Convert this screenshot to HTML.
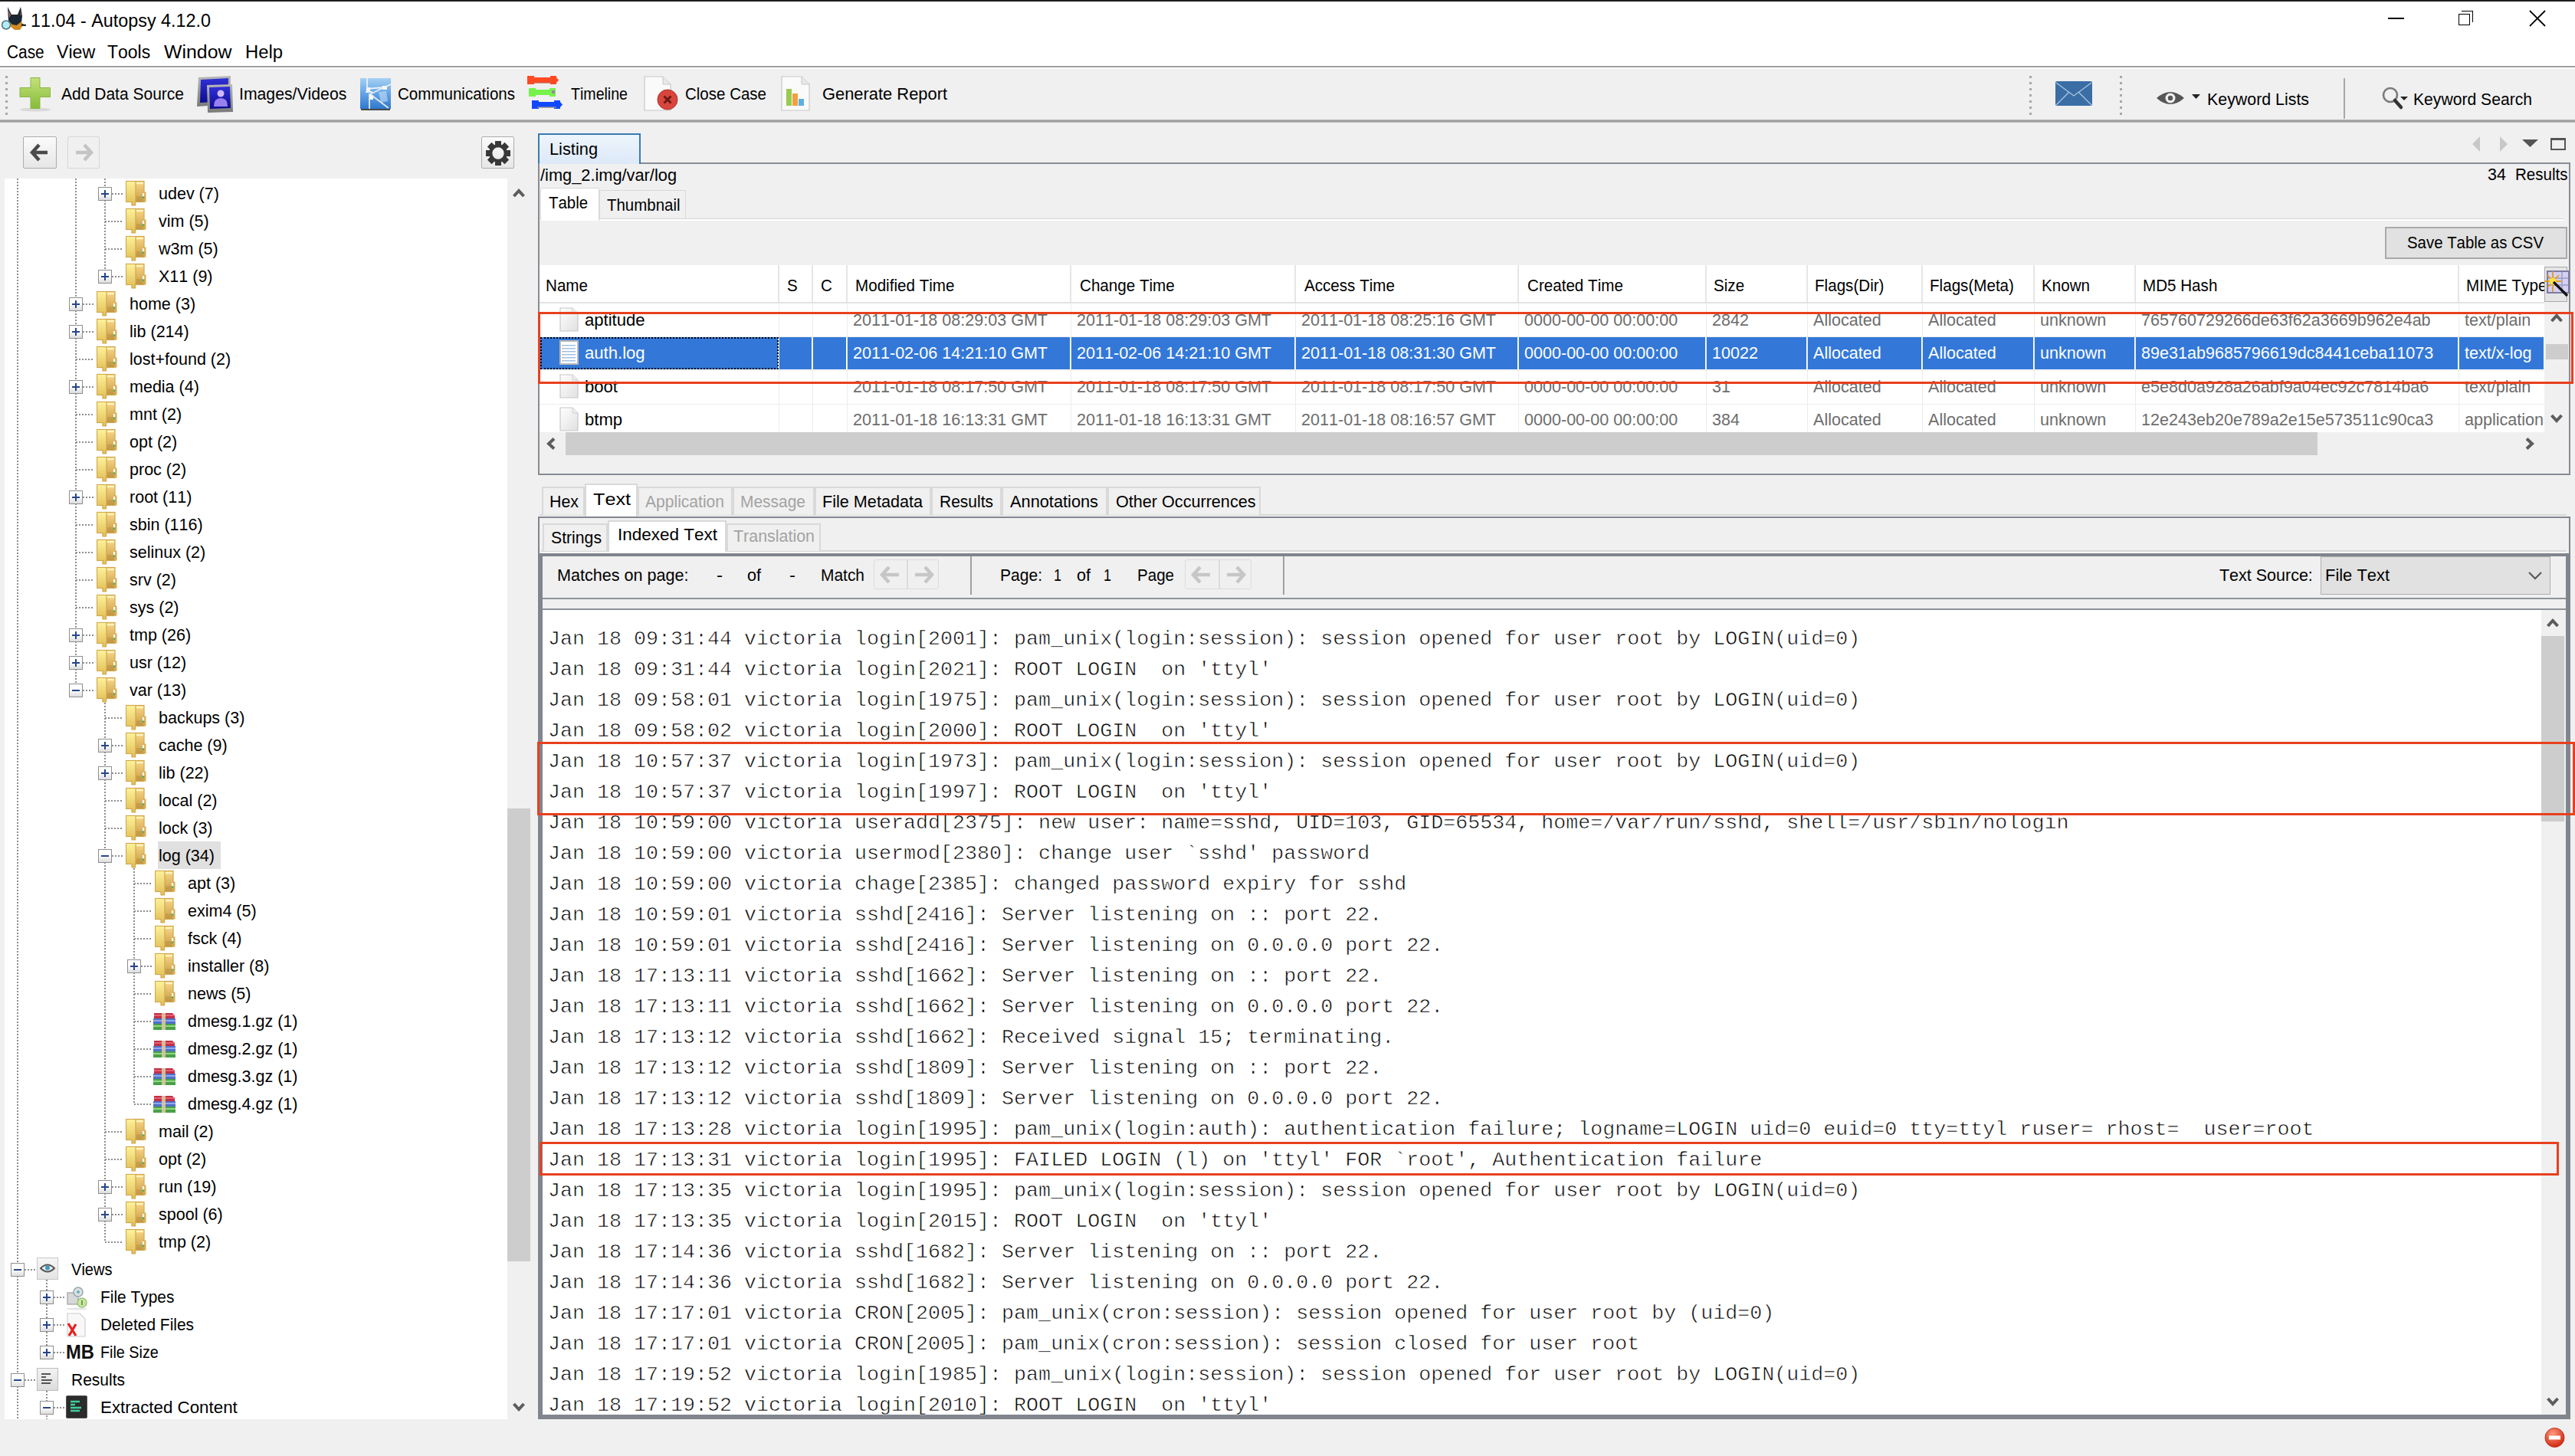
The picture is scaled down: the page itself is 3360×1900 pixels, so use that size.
<!DOCTYPE html>
<html><head><meta charset="utf-8"><title>Autopsy</title>
<style>
html,body{margin:0;padding:0;}
body{width:3360px;height:1900px;position:relative;overflow:hidden;background:#f0f0f0;font-family:"Liberation Sans",sans-serif;}
.a{position:absolute;box-sizing:border-box;}
.t{position:absolute;white-space:pre;font-family:"Liberation Sans",sans-serif;transform-origin:0 0;font-kerning:none;}
.m{position:absolute;white-space:pre;font-family:"Liberation Mono",monospace;transform-origin:0 0;font-kerning:none;}
</style></head><body>
<div class="a" style="left:0px;top:0px;width:3360px;height:87px;background:#fff"></div>
<div class="a" style="left:0px;top:0px;width:3360px;height:2px;background:#1e1e1e"></div>
<svg class="a" style="left:0px;top:5px;" width="40" height="40" viewBox="0 0 40 40">
<path d="M10 4 L15 14 L23 14 L27 4 L29 16 L28 24 L22 28 L15 28 L11 22 Z" fill="#1b2733"/>
<path d="M11 8 L14 15 L12 18 Z" fill="#b06a60"/><path d="M27 8 L28 15 L26 15 Z" fill="#7a4a40"/>
<path d="M11 22 L16 27 L22 28 L28 23 L30 28 L26 34 L19 34 L14 30 Z" fill="#d2891f"/>
<path d="M28 26 L34 27 L34 29 L28 29 Z" fill="#2a2a2a"/>
<circle cx="8" cy="27.5" r="5.5" fill="#b4ecf6" stroke="#4f7280" stroke-width="1.5"/>
</svg>
<div class="t" style="left:40px;top:11.38px;font-size:24px;line-height:32px;color:#000;transform:scaleX(0.9731);">11.04 - Autopsy 4.12.0</div>
<div class="a" style="left:3116px;top:23px;width:21px;height:2px;background:#000"></div>
<div class="a" style="left:3208px;top:18px;width:15px;height:15px;border:1.5px solid #000;background:#fff"></div>
<div class="a" style="left:3212px;top:14px;width:15px;height:15px;border-top:1.5px solid #000;border-right:1.5px solid #000"></div>
<svg class="a" style="left:3300px;top:13px;" width="22" height="22" viewBox="0 0 22 22"><path d="M1 1 L21 21 M21 1 L1 21" stroke="#000" stroke-width="1.8"/></svg>
<div class="t" style="left:9.3px;top:53.05px;font-size:23.5px;line-height:31px;color:#000;transform:scaleX(0.8877);">Case</div>
<div class="t" style="left:73.8px;top:53.05px;font-size:23.5px;line-height:31px;color:#000;transform:scaleX(0.9856);">View</div>
<div class="t" style="left:139.8px;top:53.05px;font-size:23.5px;line-height:31px;color:#000;transform:scaleX(0.9780);">Tools</div>
<div class="t" style="left:213.6px;top:53.05px;font-size:23.5px;line-height:31px;color:#000;transform:scaleX(1.0577);">Window</div>
<div class="t" style="left:320px;top:53.05px;font-size:23.5px;line-height:31px;color:#000;transform:scaleX(1.0138);">Help</div>
<div class="a" style="left:0px;top:86px;width:3360px;height:2px;background:#a0a0a0"></div>
<div class="a" style="left:0px;top:88px;width:3360px;height:69px;background:#f0f0f0"></div>
<div class="a" style="left:0px;top:156px;width:3360px;height:4px;background:linear-gradient(#c4c4c4,#a0a0a0 30%,#a0a0a0 70%,#c8c8c8)"></div>
<div class="a" style="left:0px;top:88px;width:3360px;height:1.5px;background:#fff"></div>
<div class="a" style="left:7px;top:99px;width:3px;height:3px;background:#a8a8a8"></div>
<div class="a" style="left:7px;top:107px;width:3px;height:3px;background:#a8a8a8"></div>
<div class="a" style="left:7px;top:115px;width:3px;height:3px;background:#a8a8a8"></div>
<div class="a" style="left:7px;top:123px;width:3px;height:3px;background:#a8a8a8"></div>
<div class="a" style="left:7px;top:131px;width:3px;height:3px;background:#a8a8a8"></div>
<div class="a" style="left:7px;top:139px;width:3px;height:3px;background:#a8a8a8"></div>
<div class="a" style="left:7px;top:147px;width:3px;height:3px;background:#a8a8a8"></div>
<div class="a" style="left:2648px;top:99px;width:3px;height:3px;background:#a8a8a8"></div>
<div class="a" style="left:2648px;top:107px;width:3px;height:3px;background:#a8a8a8"></div>
<div class="a" style="left:2648px;top:115px;width:3px;height:3px;background:#a8a8a8"></div>
<div class="a" style="left:2648px;top:123px;width:3px;height:3px;background:#a8a8a8"></div>
<div class="a" style="left:2648px;top:131px;width:3px;height:3px;background:#a8a8a8"></div>
<div class="a" style="left:2648px;top:139px;width:3px;height:3px;background:#a8a8a8"></div>
<div class="a" style="left:2648px;top:147px;width:3px;height:3px;background:#a8a8a8"></div>
<div class="a" style="left:2766px;top:99px;width:3px;height:3px;background:#a8a8a8"></div>
<div class="a" style="left:2766px;top:107px;width:3px;height:3px;background:#a8a8a8"></div>
<div class="a" style="left:2766px;top:115px;width:3px;height:3px;background:#a8a8a8"></div>
<div class="a" style="left:2766px;top:123px;width:3px;height:3px;background:#a8a8a8"></div>
<div class="a" style="left:2766px;top:131px;width:3px;height:3px;background:#a8a8a8"></div>
<div class="a" style="left:2766px;top:139px;width:3px;height:3px;background:#a8a8a8"></div>
<div class="a" style="left:2766px;top:147px;width:3px;height:3px;background:#a8a8a8"></div>
<svg class="a" style="left:24px;top:100px;" width="46" height="46" viewBox="0 0 46 46">
<defs><linearGradient id="gp" x1="0" y1="0" x2="0" y2="1"><stop offset="0" stop-color="#c3e27a"/><stop offset="1" stop-color="#86bb3a"/></linearGradient></defs>
<ellipse cx="22" cy="43" rx="20" ry="2.5" fill="#d8d8d8"/>
<path d="M16 1.5 H28 V14.5 H41.5 V26.5 H28 V41.5 H16 V26.5 H2 V14.5 H16 Z" fill="url(#gp)" stroke="#8ab544" stroke-width="1"/>
</svg>
<div class="t" style="left:80px;top:107.90px;font-size:22.5px;line-height:30px;color:#000;transform:scaleX(0.9337);">Add Data Source</div>
<svg class="a" style="left:254px;top:96px;" width="54" height="54" viewBox="0 0 54 54">
<defs><linearGradient id="gfr" x1="0" y1="0" x2="0" y2="1"><stop offset="0" stop-color="#b8b8b8"/><stop offset="1" stop-color="#7a7a7a"/></linearGradient>
<linearGradient id="gbl" x1="0" y1="0" x2="0" y2="1"><stop offset="0" stop-color="#3030d8"/><stop offset="1" stop-color="#0c0c90"/></linearGradient></defs>
<path d="M5 5 L47 3 L46 40 L3 43 Z" fill="url(#gfr)"/>
<path d="M8 8 L44 6 L43 36 L7 38 Z" fill="url(#gbl)"/>
<path d="M16 15 L49 14 L50 50 L17 51 Z" fill="url(#gfr)"/>
<path d="M19 18 L46 17 L47 45 L20 46 Z" fill="url(#gbl)"/>
<circle cx="34" cy="26" r="4.5" fill="#d0b8ff"/>
<path d="M25 43 Q25 32 34 32 Q43 32 43 43 Z" fill="#9880f0"/>
</svg>
<div class="t" style="left:312.3px;top:107.90px;font-size:22.5px;line-height:30px;color:#000;transform:scaleX(0.9427);">Images/Videos</div>
<svg class="a" style="left:470px;top:102px;" width="40" height="42" viewBox="0 0 40 42">
<defs><linearGradient id="gc" x1="0" y1="0" x2="0" y2="1"><stop offset="0" stop-color="#a6d0f4"/><stop offset="0.45" stop-color="#6aa8e6"/><stop offset="1" stop-color="#2f78cc"/></linearGradient></defs>
<rect x="0" y="0" width="40" height="40" fill="url(#gc)"/>
<rect x="1" y="40" width="38" height="2" fill="#4a4a4a"/>
<path d="M24 18 L34 17 L36 30 L27 32 Z" fill="#cfe6fa" opacity="0.55"/>
<path d="M9 0 V15 M8 14 L31 12 L40 8 M13 21 L31 12 M12 20 V40 M13 21 L37 39 M7 18 H16" stroke="#f2f6fa" stroke-width="1.8" fill="none" opacity="0.9"/>
<rect x="8" y="12" width="5" height="5" fill="#f6f6f0"/><rect x="29" y="10" width="6" height="5" fill="#f6f6f0"/><rect x="12" y="22" width="5" height="6" fill="#f6f6f0"/>
</svg>
<div class="t" style="left:519px;top:107.90px;font-size:22.5px;line-height:30px;color:#000;transform:scaleX(0.9131);">Communications</div>
<svg class="a" style="left:686px;top:96px;" width="50" height="50" viewBox="0 0 50 50">
<g fill="#ff4a22"><rect x="2" y="3" width="9" height="11"/><rect x="9" y="5" width="26" height="7"/><rect x="32" y="3" width="8" height="11"/><path d="M39 4 L43 8.5 L39 13 Z"/></g>
<rect x="9" y="11" width="26" height="2" fill="#c86040" opacity="0.6"/>
<g fill="#76f24a"><rect x="4" y="19" width="9" height="11"/><rect x="11" y="21" width="22" height="7"/><rect x="31" y="19" width="8" height="11"/></g>
<rect x="34" y="22" width="4" height="4" fill="#9a8aa0"/>
<g fill="#1048ff"><rect x="8" y="35" width="9" height="11"/><rect x="15" y="37" width="25" height="7"/><rect x="37" y="35" width="8" height="11"/><path d="M44 36 L48 40.5 L44 45 Z"/></g>
<rect x="15" y="43" width="25" height="2" fill="#8a8a8a" opacity="0.7"/>
</svg>
<div class="t" style="left:745px;top:107.90px;font-size:22.5px;line-height:30px;color:#000;transform:scaleX(0.8704);">Timeline</div>
<svg class="a" style="left:839px;top:98px;" width="48" height="50" viewBox="0 0 48 50">
<path d="M2 2 H26 L36 12 V46 H2 Z" fill="#fafafa" stroke="#c8c8c8" stroke-width="1.2"/>
<path d="M26 2 V12 H36" fill="#e8e8e8" stroke="#c8c8c8" stroke-width="1"/>
<circle cx="32" cy="32" r="13" fill="#d9453d" stroke="#b03028" stroke-width="1"/>
<path d="M27.5 27.5 L36.5 36.5 M36.5 27.5 L27.5 36.5" stroke="#6b1a14" stroke-width="3"/>
</svg>
<div class="t" style="left:894px;top:107.90px;font-size:22.5px;line-height:30px;color:#000;transform:scaleX(0.9114);">Close Case</div>
<svg class="a" style="left:1018px;top:98px;" width="46" height="50" viewBox="0 0 46 50">
<path d="M2 2 H28 L38 12 V46 H2 Z" fill="#fafafa" stroke="#c8c8c8" stroke-width="1.2"/>
<path d="M28 2 V12 H38" fill="#e8e8e8" stroke="#c8c8c8" stroke-width="1"/>
<rect x="8" y="18" width="7" height="22" fill="#9acb4f"/>
<rect x="16" y="24" width="7" height="16" fill="#f0a040"/>
<rect x="24" y="31" width="7" height="9" fill="#5bb0e0"/>
</svg>
<div class="t" style="left:1073px;top:107.90px;font-size:22.5px;line-height:30px;color:#000;transform:scaleX(0.9726);">Generate Report</div>
<svg class="a" style="left:2681px;top:105px;" width="50" height="34" viewBox="0 0 50 34">
<rect x="1" y="1" width="48" height="32" rx="2" fill="#3a6ea5"/>
<path d="M2 3 L25 20 L48 3 M2 32 L19 15 M48 32 L31 15" stroke="#a8c4e0" stroke-width="1.4" fill="none"/>
</svg>
<svg class="a" style="left:2812px;top:116px;" width="40" height="24" viewBox="0 0 40 24">
<path d="M2 12 Q20 -4 38 12 Q20 28 2 12 Z" fill="#575757"/>
<circle cx="20" cy="12" r="6.5" fill="#f0f0f0"/><circle cx="20" cy="12" r="3.2" fill="#575757"/>
</svg>
<svg class="a" style="left:2860px;top:123px;" width="12" height="8" viewBox="0 0 12 8"><path d="M0 0 H11 L5.5 6 Z" fill="#222"/></svg>
<div class="t" style="left:2880px;top:114.90px;font-size:22.5px;line-height:30px;color:#000;transform:scaleX(0.9496);">Keyword Lists</div>
<div class="a" style="left:3058px;top:102px;width:2px;height:53px;background:#a8a8a8"></div>
<svg class="a" style="left:3106px;top:112px;" width="38" height="32" viewBox="0 0 38 32">
<circle cx="13" cy="12" r="9" fill="none" stroke="#7a7a7a" stroke-width="2.6"/>
<path d="M19 19 L27 28" stroke="#333" stroke-width="4.5" stroke-linecap="round"/>
<path d="M26 14 H36 L31 19 Z" fill="#222"/>
</svg>
<div class="t" style="left:3149px;top:114.90px;font-size:22.5px;line-height:30px;color:#000;transform:scaleX(0.9389);">Keyword Search</div>
<div class="a" style="left:30px;top:178px;width:44px;height:42px;border:1.5px solid #acacac;border-radius:2px;background:linear-gradient(#fbfbfb,#e6e6e6)"></div>
<svg class="a" style="left:38px;top:186px;" width="28" height="26" viewBox="0 0 28 26"><path d="M13 3 L4 13 L13 23 M4 13 H24" stroke="#4a4a4a" stroke-width="4.5" fill="none" stroke-linejoin="miter"/></svg>
<div class="a" style="left:88px;top:178px;width:42px;height:42px;border:1.5px solid #d6d6d6;border-radius:2px;background:#f0f0f0"></div>
<svg class="a" style="left:95px;top:186px;" width="28" height="26" viewBox="0 0 28 26"><path d="M15 3 L24 13 L15 23 M24 13 H4" stroke="#c4c4c4" stroke-width="4.5" fill="none"/></svg>
<div class="a" style="left:628px;top:178px;width:43px;height:42px;border:1.5px solid #acacac;border-radius:2px;background:linear-gradient(#fbfbfb,#e6e6e6)"></div>
<svg class="a" style="left:633px;top:183px;" width="34" height="34" viewBox="0 0 34 34"><g transform="translate(17,17)"><rect x="-4" y="-16" width="8" height="6" fill="#383838" transform="rotate(0)"/><rect x="-4" y="-16" width="8" height="6" fill="#383838" transform="rotate(45)"/><rect x="-4" y="-16" width="8" height="6" fill="#383838" transform="rotate(90)"/><rect x="-4" y="-16" width="8" height="6" fill="#383838" transform="rotate(135)"/><rect x="-4" y="-16" width="8" height="6" fill="#383838" transform="rotate(180)"/><rect x="-4" y="-16" width="8" height="6" fill="#383838" transform="rotate(225)"/><rect x="-4" y="-16" width="8" height="6" fill="#383838" transform="rotate(270)"/><rect x="-4" y="-16" width="8" height="6" fill="#383838" transform="rotate(315)"/><circle r="9.75" fill="none" stroke="#383838" stroke-width="4.2"/></g></svg>
<div class="a" style="left:6px;top:233px;width:656px;height:1619px;background:#fff"></div>
<div class="a" style="left:662px;top:233px;width:30px;height:1619px;background:#f0f0f0"></div>
<div class="a" style="left:662px;top:1055px;width:30px;height:591px;background:#cdcdcd"></div>
<svg class="a" style="left:669px;top:245px;" width="16" height="14" viewBox="0 0 16 14"><path d="M1.5 11 L8 4 L14.5 11" stroke="#5c5c5c" stroke-width="4" fill="none"/></svg>
<svg class="a" style="left:669px;top:1829px;" width="16" height="14" viewBox="0 0 16 14"><path d="M1.5 3 L8 10 L14.5 3" stroke="#5c5c5c" stroke-width="4" fill="none"/></svg>
<svg width="0" height="0" style="position:absolute"><defs><linearGradient id="fy" x1="0" y1="0" x2="0" y2="1"><stop offset="0" stop-color="#fdf29a"/><stop offset="1" stop-color="#e2bd55"/></linearGradient>
<linearGradient id="fo" x1="0" y1="0" x2="0" y2="1"><stop offset="0" stop-color="#fbd88a"/><stop offset="1" stop-color="#c99d45"/></linearGradient></defs></svg>
<div class="a" style="left:22px;top:233px;width:2px;height:1619px;background:repeating-linear-gradient(to bottom,#8e8e8e 0 2px,transparent 2px 4px)"></div>
<div class="a" style="left:98px;top:233px;width:2px;height:668px;background:repeating-linear-gradient(to bottom,#8e8e8e 0 2px,transparent 2px 4px)"></div>
<div class="a" style="left:136px;top:233px;width:2px;height:128px;background:repeating-linear-gradient(to bottom,#8e8e8e 0 2px,transparent 2px 4px)"></div>
<div class="a" style="left:136px;top:917px;width:2px;height:704px;background:repeating-linear-gradient(to bottom,#8e8e8e 0 2px,transparent 2px 4px)"></div>
<div class="a" style="left:174px;top:1133px;width:2px;height:308px;background:repeating-linear-gradient(to bottom,#8e8e8e 0 2px,transparent 2px 4px)"></div>
<div class="a" style="left:60px;top:1670px;width:2px;height:95px;background:repeating-linear-gradient(to bottom,#8e8e8e 0 2px,transparent 2px 4px)"></div>
<div class="a" style="left:60px;top:1815px;width:2px;height:37px;background:repeating-linear-gradient(to bottom,#8e8e8e 0 2px,transparent 2px 4px)"></div>
<div class="a" style="left:146px;top:252px;width:14px;height:2px;background:repeating-linear-gradient(to right,#8e8e8e 0 2px,transparent 2px 4px)"></div>
<div class="a" style="left:128px;top:244px;width:18px;height:18px;border:1.5px solid #8f8f8f;background:linear-gradient(#ffffff 40%,#dedede)"></div>
<div class="a" style="left:132px;top:252px;width:10px;height:2px;background:#27468a"></div>
<div class="a" style="left:136px;top:248px;width:2px;height:10px;background:#27468a"></div>
<svg class="a" style="left:164px;top:235px;" width="27" height="35" viewBox="0 0 27 35">
<rect x="0.5" y="1.5" width="23.5" height="27" fill="url(#fo)" stroke="#cfa84e" stroke-width="1.2"/>
<rect x="13" y="3" width="10" height="2.2" fill="#fff4c0"/>
<rect x="13.5" y="21" width="9" height="7" fill="#b89048" opacity="0.45"/>
<rect x="23.5" y="15.5" width="3" height="13" fill="#d6ae52"/>
<rect x="22" y="17" width="2.2" height="4.5" fill="#fff"/><rect x="22" y="21.5" width="2.2" height="2.2" fill="#3cb060"/>
<path d="M0.5 1.5 H13 V28.5 H12.5 V33 H8 V28.5 H0.5 Z" fill="url(#fy)" stroke="#cfa84e" stroke-width="1.2"/>
</svg>
<div class="t" style="left:206.5px;top:237.70px;font-size:22.5px;line-height:30px;color:#000;transform:scaleX(0.9560);">udev (7)</div>
<div class="a" style="left:137px;top:288px;width:23px;height:2px;background:repeating-linear-gradient(to right,#8e8e8e 0 2px,transparent 2px 4px)"></div>
<svg class="a" style="left:164px;top:271px;" width="27" height="35" viewBox="0 0 27 35">
<rect x="0.5" y="1.5" width="23.5" height="27" fill="url(#fo)" stroke="#cfa84e" stroke-width="1.2"/>
<rect x="13" y="3" width="10" height="2.2" fill="#fff4c0"/>
<rect x="13.5" y="21" width="9" height="7" fill="#b89048" opacity="0.45"/>
<rect x="23.5" y="15.5" width="3" height="13" fill="#d6ae52"/>
<rect x="22" y="17" width="2.2" height="4.5" fill="#fff"/><rect x="22" y="21.5" width="2.2" height="2.2" fill="#3cb060"/>
<path d="M0.5 1.5 H13 V28.5 H12.5 V33 H8 V28.5 H0.5 Z" fill="url(#fy)" stroke="#cfa84e" stroke-width="1.2"/>
</svg>
<div class="t" style="left:206.5px;top:273.70px;font-size:22.5px;line-height:30px;color:#000;transform:scaleX(0.9560);">vim (5)</div>
<div class="a" style="left:137px;top:324px;width:23px;height:2px;background:repeating-linear-gradient(to right,#8e8e8e 0 2px,transparent 2px 4px)"></div>
<svg class="a" style="left:164px;top:307px;" width="27" height="35" viewBox="0 0 27 35">
<rect x="0.5" y="1.5" width="23.5" height="27" fill="url(#fo)" stroke="#cfa84e" stroke-width="1.2"/>
<rect x="13" y="3" width="10" height="2.2" fill="#fff4c0"/>
<rect x="13.5" y="21" width="9" height="7" fill="#b89048" opacity="0.45"/>
<rect x="23.5" y="15.5" width="3" height="13" fill="#d6ae52"/>
<rect x="22" y="17" width="2.2" height="4.5" fill="#fff"/><rect x="22" y="21.5" width="2.2" height="2.2" fill="#3cb060"/>
<path d="M0.5 1.5 H13 V28.5 H12.5 V33 H8 V28.5 H0.5 Z" fill="url(#fy)" stroke="#cfa84e" stroke-width="1.2"/>
</svg>
<div class="t" style="left:206.5px;top:309.70px;font-size:22.5px;line-height:30px;color:#000;transform:scaleX(0.9560);">w3m (5)</div>
<div class="a" style="left:146px;top:360px;width:14px;height:2px;background:repeating-linear-gradient(to right,#8e8e8e 0 2px,transparent 2px 4px)"></div>
<div class="a" style="left:128px;top:352px;width:18px;height:18px;border:1.5px solid #8f8f8f;background:linear-gradient(#ffffff 40%,#dedede)"></div>
<div class="a" style="left:132px;top:360px;width:10px;height:2px;background:#27468a"></div>
<div class="a" style="left:136px;top:356px;width:2px;height:10px;background:#27468a"></div>
<svg class="a" style="left:164px;top:343px;" width="27" height="35" viewBox="0 0 27 35">
<rect x="0.5" y="1.5" width="23.5" height="27" fill="url(#fo)" stroke="#cfa84e" stroke-width="1.2"/>
<rect x="13" y="3" width="10" height="2.2" fill="#fff4c0"/>
<rect x="13.5" y="21" width="9" height="7" fill="#b89048" opacity="0.45"/>
<rect x="23.5" y="15.5" width="3" height="13" fill="#d6ae52"/>
<rect x="22" y="17" width="2.2" height="4.5" fill="#fff"/><rect x="22" y="21.5" width="2.2" height="2.2" fill="#3cb060"/>
<path d="M0.5 1.5 H13 V28.5 H12.5 V33 H8 V28.5 H0.5 Z" fill="url(#fy)" stroke="#cfa84e" stroke-width="1.2"/>
</svg>
<div class="t" style="left:206.5px;top:345.70px;font-size:22.5px;line-height:30px;color:#000;transform:scaleX(0.9560);">X11 (9)</div>
<div class="a" style="left:108px;top:396px;width:14px;height:2px;background:repeating-linear-gradient(to right,#8e8e8e 0 2px,transparent 2px 4px)"></div>
<div class="a" style="left:90px;top:388px;width:18px;height:18px;border:1.5px solid #8f8f8f;background:linear-gradient(#ffffff 40%,#dedede)"></div>
<div class="a" style="left:94px;top:396px;width:10px;height:2px;background:#27468a"></div>
<div class="a" style="left:98px;top:392px;width:2px;height:10px;background:#27468a"></div>
<svg class="a" style="left:126px;top:379px;" width="27" height="35" viewBox="0 0 27 35">
<rect x="0.5" y="1.5" width="23.5" height="27" fill="url(#fo)" stroke="#cfa84e" stroke-width="1.2"/>
<rect x="13" y="3" width="10" height="2.2" fill="#fff4c0"/>
<rect x="13.5" y="21" width="9" height="7" fill="#b89048" opacity="0.45"/>
<rect x="23.5" y="15.5" width="3" height="13" fill="#d6ae52"/>
<rect x="22" y="17" width="2.2" height="4.5" fill="#fff"/><rect x="22" y="21.5" width="2.2" height="2.2" fill="#3cb060"/>
<path d="M0.5 1.5 H13 V28.5 H12.5 V33 H8 V28.5 H0.5 Z" fill="url(#fy)" stroke="#cfa84e" stroke-width="1.2"/>
</svg>
<div class="t" style="left:168.5px;top:381.70px;font-size:22.5px;line-height:30px;color:#000;transform:scaleX(0.9560);">home (3)</div>
<div class="a" style="left:108px;top:432px;width:14px;height:2px;background:repeating-linear-gradient(to right,#8e8e8e 0 2px,transparent 2px 4px)"></div>
<div class="a" style="left:90px;top:424px;width:18px;height:18px;border:1.5px solid #8f8f8f;background:linear-gradient(#ffffff 40%,#dedede)"></div>
<div class="a" style="left:94px;top:432px;width:10px;height:2px;background:#27468a"></div>
<div class="a" style="left:98px;top:428px;width:2px;height:10px;background:#27468a"></div>
<svg class="a" style="left:126px;top:415px;" width="27" height="35" viewBox="0 0 27 35">
<rect x="0.5" y="1.5" width="23.5" height="27" fill="url(#fo)" stroke="#cfa84e" stroke-width="1.2"/>
<rect x="13" y="3" width="10" height="2.2" fill="#fff4c0"/>
<rect x="13.5" y="21" width="9" height="7" fill="#b89048" opacity="0.45"/>
<rect x="23.5" y="15.5" width="3" height="13" fill="#d6ae52"/>
<rect x="22" y="17" width="2.2" height="4.5" fill="#fff"/><rect x="22" y="21.5" width="2.2" height="2.2" fill="#3cb060"/>
<path d="M0.5 1.5 H13 V28.5 H12.5 V33 H8 V28.5 H0.5 Z" fill="url(#fy)" stroke="#cfa84e" stroke-width="1.2"/>
</svg>
<div class="t" style="left:168.5px;top:417.70px;font-size:22.5px;line-height:30px;color:#000;transform:scaleX(0.9560);">lib (214)</div>
<div class="a" style="left:99px;top:468px;width:23px;height:2px;background:repeating-linear-gradient(to right,#8e8e8e 0 2px,transparent 2px 4px)"></div>
<svg class="a" style="left:126px;top:451px;" width="27" height="35" viewBox="0 0 27 35">
<rect x="0.5" y="1.5" width="23.5" height="27" fill="url(#fo)" stroke="#cfa84e" stroke-width="1.2"/>
<rect x="13" y="3" width="10" height="2.2" fill="#fff4c0"/>
<rect x="13.5" y="21" width="9" height="7" fill="#b89048" opacity="0.45"/>
<rect x="23.5" y="15.5" width="3" height="13" fill="#d6ae52"/>
<rect x="22" y="17" width="2.2" height="4.5" fill="#fff"/><rect x="22" y="21.5" width="2.2" height="2.2" fill="#3cb060"/>
<path d="M0.5 1.5 H13 V28.5 H12.5 V33 H8 V28.5 H0.5 Z" fill="url(#fy)" stroke="#cfa84e" stroke-width="1.2"/>
</svg>
<div class="t" style="left:168.5px;top:453.70px;font-size:22.5px;line-height:30px;color:#000;transform:scaleX(0.9560);">lost+found (2)</div>
<div class="a" style="left:108px;top:504px;width:14px;height:2px;background:repeating-linear-gradient(to right,#8e8e8e 0 2px,transparent 2px 4px)"></div>
<div class="a" style="left:90px;top:496px;width:18px;height:18px;border:1.5px solid #8f8f8f;background:linear-gradient(#ffffff 40%,#dedede)"></div>
<div class="a" style="left:94px;top:504px;width:10px;height:2px;background:#27468a"></div>
<div class="a" style="left:98px;top:500px;width:2px;height:10px;background:#27468a"></div>
<svg class="a" style="left:126px;top:487px;" width="27" height="35" viewBox="0 0 27 35">
<rect x="0.5" y="1.5" width="23.5" height="27" fill="url(#fo)" stroke="#cfa84e" stroke-width="1.2"/>
<rect x="13" y="3" width="10" height="2.2" fill="#fff4c0"/>
<rect x="13.5" y="21" width="9" height="7" fill="#b89048" opacity="0.45"/>
<rect x="23.5" y="15.5" width="3" height="13" fill="#d6ae52"/>
<rect x="22" y="17" width="2.2" height="4.5" fill="#fff"/><rect x="22" y="21.5" width="2.2" height="2.2" fill="#3cb060"/>
<path d="M0.5 1.5 H13 V28.5 H12.5 V33 H8 V28.5 H0.5 Z" fill="url(#fy)" stroke="#cfa84e" stroke-width="1.2"/>
</svg>
<div class="t" style="left:168.5px;top:489.70px;font-size:22.5px;line-height:30px;color:#000;transform:scaleX(0.9560);">media (4)</div>
<div class="a" style="left:99px;top:540px;width:23px;height:2px;background:repeating-linear-gradient(to right,#8e8e8e 0 2px,transparent 2px 4px)"></div>
<svg class="a" style="left:126px;top:523px;" width="27" height="35" viewBox="0 0 27 35">
<rect x="0.5" y="1.5" width="23.5" height="27" fill="url(#fo)" stroke="#cfa84e" stroke-width="1.2"/>
<rect x="13" y="3" width="10" height="2.2" fill="#fff4c0"/>
<rect x="13.5" y="21" width="9" height="7" fill="#b89048" opacity="0.45"/>
<rect x="23.5" y="15.5" width="3" height="13" fill="#d6ae52"/>
<rect x="22" y="17" width="2.2" height="4.5" fill="#fff"/><rect x="22" y="21.5" width="2.2" height="2.2" fill="#3cb060"/>
<path d="M0.5 1.5 H13 V28.5 H12.5 V33 H8 V28.5 H0.5 Z" fill="url(#fy)" stroke="#cfa84e" stroke-width="1.2"/>
</svg>
<div class="t" style="left:168.5px;top:525.70px;font-size:22.5px;line-height:30px;color:#000;transform:scaleX(0.9560);">mnt (2)</div>
<div class="a" style="left:99px;top:576px;width:23px;height:2px;background:repeating-linear-gradient(to right,#8e8e8e 0 2px,transparent 2px 4px)"></div>
<svg class="a" style="left:126px;top:559px;" width="27" height="35" viewBox="0 0 27 35">
<rect x="0.5" y="1.5" width="23.5" height="27" fill="url(#fo)" stroke="#cfa84e" stroke-width="1.2"/>
<rect x="13" y="3" width="10" height="2.2" fill="#fff4c0"/>
<rect x="13.5" y="21" width="9" height="7" fill="#b89048" opacity="0.45"/>
<rect x="23.5" y="15.5" width="3" height="13" fill="#d6ae52"/>
<rect x="22" y="17" width="2.2" height="4.5" fill="#fff"/><rect x="22" y="21.5" width="2.2" height="2.2" fill="#3cb060"/>
<path d="M0.5 1.5 H13 V28.5 H12.5 V33 H8 V28.5 H0.5 Z" fill="url(#fy)" stroke="#cfa84e" stroke-width="1.2"/>
</svg>
<div class="t" style="left:168.5px;top:561.70px;font-size:22.5px;line-height:30px;color:#000;transform:scaleX(0.9560);">opt (2)</div>
<div class="a" style="left:99px;top:612px;width:23px;height:2px;background:repeating-linear-gradient(to right,#8e8e8e 0 2px,transparent 2px 4px)"></div>
<svg class="a" style="left:126px;top:595px;" width="27" height="35" viewBox="0 0 27 35">
<rect x="0.5" y="1.5" width="23.5" height="27" fill="url(#fo)" stroke="#cfa84e" stroke-width="1.2"/>
<rect x="13" y="3" width="10" height="2.2" fill="#fff4c0"/>
<rect x="13.5" y="21" width="9" height="7" fill="#b89048" opacity="0.45"/>
<rect x="23.5" y="15.5" width="3" height="13" fill="#d6ae52"/>
<rect x="22" y="17" width="2.2" height="4.5" fill="#fff"/><rect x="22" y="21.5" width="2.2" height="2.2" fill="#3cb060"/>
<path d="M0.5 1.5 H13 V28.5 H12.5 V33 H8 V28.5 H0.5 Z" fill="url(#fy)" stroke="#cfa84e" stroke-width="1.2"/>
</svg>
<div class="t" style="left:168.5px;top:597.70px;font-size:22.5px;line-height:30px;color:#000;transform:scaleX(0.9560);">proc (2)</div>
<div class="a" style="left:108px;top:648px;width:14px;height:2px;background:repeating-linear-gradient(to right,#8e8e8e 0 2px,transparent 2px 4px)"></div>
<div class="a" style="left:90px;top:640px;width:18px;height:18px;border:1.5px solid #8f8f8f;background:linear-gradient(#ffffff 40%,#dedede)"></div>
<div class="a" style="left:94px;top:648px;width:10px;height:2px;background:#27468a"></div>
<div class="a" style="left:98px;top:644px;width:2px;height:10px;background:#27468a"></div>
<svg class="a" style="left:126px;top:631px;" width="27" height="35" viewBox="0 0 27 35">
<rect x="0.5" y="1.5" width="23.5" height="27" fill="url(#fo)" stroke="#cfa84e" stroke-width="1.2"/>
<rect x="13" y="3" width="10" height="2.2" fill="#fff4c0"/>
<rect x="13.5" y="21" width="9" height="7" fill="#b89048" opacity="0.45"/>
<rect x="23.5" y="15.5" width="3" height="13" fill="#d6ae52"/>
<rect x="22" y="17" width="2.2" height="4.5" fill="#fff"/><rect x="22" y="21.5" width="2.2" height="2.2" fill="#3cb060"/>
<path d="M0.5 1.5 H13 V28.5 H12.5 V33 H8 V28.5 H0.5 Z" fill="url(#fy)" stroke="#cfa84e" stroke-width="1.2"/>
</svg>
<div class="t" style="left:168.5px;top:633.70px;font-size:22.5px;line-height:30px;color:#000;transform:scaleX(0.9560);">root (11)</div>
<div class="a" style="left:99px;top:684px;width:23px;height:2px;background:repeating-linear-gradient(to right,#8e8e8e 0 2px,transparent 2px 4px)"></div>
<svg class="a" style="left:126px;top:667px;" width="27" height="35" viewBox="0 0 27 35">
<rect x="0.5" y="1.5" width="23.5" height="27" fill="url(#fo)" stroke="#cfa84e" stroke-width="1.2"/>
<rect x="13" y="3" width="10" height="2.2" fill="#fff4c0"/>
<rect x="13.5" y="21" width="9" height="7" fill="#b89048" opacity="0.45"/>
<rect x="23.5" y="15.5" width="3" height="13" fill="#d6ae52"/>
<rect x="22" y="17" width="2.2" height="4.5" fill="#fff"/><rect x="22" y="21.5" width="2.2" height="2.2" fill="#3cb060"/>
<path d="M0.5 1.5 H13 V28.5 H12.5 V33 H8 V28.5 H0.5 Z" fill="url(#fy)" stroke="#cfa84e" stroke-width="1.2"/>
</svg>
<div class="t" style="left:168.5px;top:669.70px;font-size:22.5px;line-height:30px;color:#000;transform:scaleX(0.9560);">sbin (116)</div>
<div class="a" style="left:99px;top:720px;width:23px;height:2px;background:repeating-linear-gradient(to right,#8e8e8e 0 2px,transparent 2px 4px)"></div>
<svg class="a" style="left:126px;top:703px;" width="27" height="35" viewBox="0 0 27 35">
<rect x="0.5" y="1.5" width="23.5" height="27" fill="url(#fo)" stroke="#cfa84e" stroke-width="1.2"/>
<rect x="13" y="3" width="10" height="2.2" fill="#fff4c0"/>
<rect x="13.5" y="21" width="9" height="7" fill="#b89048" opacity="0.45"/>
<rect x="23.5" y="15.5" width="3" height="13" fill="#d6ae52"/>
<rect x="22" y="17" width="2.2" height="4.5" fill="#fff"/><rect x="22" y="21.5" width="2.2" height="2.2" fill="#3cb060"/>
<path d="M0.5 1.5 H13 V28.5 H12.5 V33 H8 V28.5 H0.5 Z" fill="url(#fy)" stroke="#cfa84e" stroke-width="1.2"/>
</svg>
<div class="t" style="left:168.5px;top:705.70px;font-size:22.5px;line-height:30px;color:#000;transform:scaleX(0.9560);">selinux (2)</div>
<div class="a" style="left:99px;top:756px;width:23px;height:2px;background:repeating-linear-gradient(to right,#8e8e8e 0 2px,transparent 2px 4px)"></div>
<svg class="a" style="left:126px;top:739px;" width="27" height="35" viewBox="0 0 27 35">
<rect x="0.5" y="1.5" width="23.5" height="27" fill="url(#fo)" stroke="#cfa84e" stroke-width="1.2"/>
<rect x="13" y="3" width="10" height="2.2" fill="#fff4c0"/>
<rect x="13.5" y="21" width="9" height="7" fill="#b89048" opacity="0.45"/>
<rect x="23.5" y="15.5" width="3" height="13" fill="#d6ae52"/>
<rect x="22" y="17" width="2.2" height="4.5" fill="#fff"/><rect x="22" y="21.5" width="2.2" height="2.2" fill="#3cb060"/>
<path d="M0.5 1.5 H13 V28.5 H12.5 V33 H8 V28.5 H0.5 Z" fill="url(#fy)" stroke="#cfa84e" stroke-width="1.2"/>
</svg>
<div class="t" style="left:168.5px;top:741.70px;font-size:22.5px;line-height:30px;color:#000;transform:scaleX(0.9560);">srv (2)</div>
<div class="a" style="left:99px;top:792px;width:23px;height:2px;background:repeating-linear-gradient(to right,#8e8e8e 0 2px,transparent 2px 4px)"></div>
<svg class="a" style="left:126px;top:775px;" width="27" height="35" viewBox="0 0 27 35">
<rect x="0.5" y="1.5" width="23.5" height="27" fill="url(#fo)" stroke="#cfa84e" stroke-width="1.2"/>
<rect x="13" y="3" width="10" height="2.2" fill="#fff4c0"/>
<rect x="13.5" y="21" width="9" height="7" fill="#b89048" opacity="0.45"/>
<rect x="23.5" y="15.5" width="3" height="13" fill="#d6ae52"/>
<rect x="22" y="17" width="2.2" height="4.5" fill="#fff"/><rect x="22" y="21.5" width="2.2" height="2.2" fill="#3cb060"/>
<path d="M0.5 1.5 H13 V28.5 H12.5 V33 H8 V28.5 H0.5 Z" fill="url(#fy)" stroke="#cfa84e" stroke-width="1.2"/>
</svg>
<div class="t" style="left:168.5px;top:777.70px;font-size:22.5px;line-height:30px;color:#000;transform:scaleX(0.9560);">sys (2)</div>
<div class="a" style="left:108px;top:828px;width:14px;height:2px;background:repeating-linear-gradient(to right,#8e8e8e 0 2px,transparent 2px 4px)"></div>
<div class="a" style="left:90px;top:820px;width:18px;height:18px;border:1.5px solid #8f8f8f;background:linear-gradient(#ffffff 40%,#dedede)"></div>
<div class="a" style="left:94px;top:828px;width:10px;height:2px;background:#27468a"></div>
<div class="a" style="left:98px;top:824px;width:2px;height:10px;background:#27468a"></div>
<svg class="a" style="left:126px;top:811px;" width="27" height="35" viewBox="0 0 27 35">
<rect x="0.5" y="1.5" width="23.5" height="27" fill="url(#fo)" stroke="#cfa84e" stroke-width="1.2"/>
<rect x="13" y="3" width="10" height="2.2" fill="#fff4c0"/>
<rect x="13.5" y="21" width="9" height="7" fill="#b89048" opacity="0.45"/>
<rect x="23.5" y="15.5" width="3" height="13" fill="#d6ae52"/>
<rect x="22" y="17" width="2.2" height="4.5" fill="#fff"/><rect x="22" y="21.5" width="2.2" height="2.2" fill="#3cb060"/>
<path d="M0.5 1.5 H13 V28.5 H12.5 V33 H8 V28.5 H0.5 Z" fill="url(#fy)" stroke="#cfa84e" stroke-width="1.2"/>
</svg>
<div class="t" style="left:168.5px;top:813.70px;font-size:22.5px;line-height:30px;color:#000;transform:scaleX(0.9560);">tmp (26)</div>
<div class="a" style="left:108px;top:864px;width:14px;height:2px;background:repeating-linear-gradient(to right,#8e8e8e 0 2px,transparent 2px 4px)"></div>
<div class="a" style="left:90px;top:856px;width:18px;height:18px;border:1.5px solid #8f8f8f;background:linear-gradient(#ffffff 40%,#dedede)"></div>
<div class="a" style="left:94px;top:864px;width:10px;height:2px;background:#27468a"></div>
<div class="a" style="left:98px;top:860px;width:2px;height:10px;background:#27468a"></div>
<svg class="a" style="left:126px;top:847px;" width="27" height="35" viewBox="0 0 27 35">
<rect x="0.5" y="1.5" width="23.5" height="27" fill="url(#fo)" stroke="#cfa84e" stroke-width="1.2"/>
<rect x="13" y="3" width="10" height="2.2" fill="#fff4c0"/>
<rect x="13.5" y="21" width="9" height="7" fill="#b89048" opacity="0.45"/>
<rect x="23.5" y="15.5" width="3" height="13" fill="#d6ae52"/>
<rect x="22" y="17" width="2.2" height="4.5" fill="#fff"/><rect x="22" y="21.5" width="2.2" height="2.2" fill="#3cb060"/>
<path d="M0.5 1.5 H13 V28.5 H12.5 V33 H8 V28.5 H0.5 Z" fill="url(#fy)" stroke="#cfa84e" stroke-width="1.2"/>
</svg>
<div class="t" style="left:168.5px;top:849.70px;font-size:22.5px;line-height:30px;color:#000;transform:scaleX(0.9560);">usr (12)</div>
<div class="a" style="left:108px;top:900px;width:14px;height:2px;background:repeating-linear-gradient(to right,#8e8e8e 0 2px,transparent 2px 4px)"></div>
<div class="a" style="left:90px;top:892px;width:18px;height:18px;border:1.5px solid #8f8f8f;background:linear-gradient(#ffffff 40%,#dedede)"></div>
<div class="a" style="left:94px;top:900px;width:10px;height:2px;background:#27468a"></div>
<svg class="a" style="left:126px;top:883px;" width="27" height="35" viewBox="0 0 27 35">
<rect x="0.5" y="1.5" width="23.5" height="27" fill="url(#fo)" stroke="#cfa84e" stroke-width="1.2"/>
<rect x="13" y="3" width="10" height="2.2" fill="#fff4c0"/>
<rect x="13.5" y="21" width="9" height="7" fill="#b89048" opacity="0.45"/>
<rect x="23.5" y="15.5" width="3" height="13" fill="#d6ae52"/>
<rect x="22" y="17" width="2.2" height="4.5" fill="#fff"/><rect x="22" y="21.5" width="2.2" height="2.2" fill="#3cb060"/>
<path d="M0.5 1.5 H13 V28.5 H12.5 V33 H8 V28.5 H0.5 Z" fill="url(#fy)" stroke="#cfa84e" stroke-width="1.2"/>
</svg>
<div class="t" style="left:168.5px;top:885.70px;font-size:22.5px;line-height:30px;color:#000;transform:scaleX(0.9560);">var (13)</div>
<div class="a" style="left:137px;top:936px;width:23px;height:2px;background:repeating-linear-gradient(to right,#8e8e8e 0 2px,transparent 2px 4px)"></div>
<svg class="a" style="left:164px;top:919px;" width="27" height="35" viewBox="0 0 27 35">
<rect x="0.5" y="1.5" width="23.5" height="27" fill="url(#fo)" stroke="#cfa84e" stroke-width="1.2"/>
<rect x="13" y="3" width="10" height="2.2" fill="#fff4c0"/>
<rect x="13.5" y="21" width="9" height="7" fill="#b89048" opacity="0.45"/>
<rect x="23.5" y="15.5" width="3" height="13" fill="#d6ae52"/>
<rect x="22" y="17" width="2.2" height="4.5" fill="#fff"/><rect x="22" y="21.5" width="2.2" height="2.2" fill="#3cb060"/>
<path d="M0.5 1.5 H13 V28.5 H12.5 V33 H8 V28.5 H0.5 Z" fill="url(#fy)" stroke="#cfa84e" stroke-width="1.2"/>
</svg>
<div class="t" style="left:206.5px;top:921.70px;font-size:22.5px;line-height:30px;color:#000;transform:scaleX(0.9560);">backups (3)</div>
<div class="a" style="left:146px;top:972px;width:14px;height:2px;background:repeating-linear-gradient(to right,#8e8e8e 0 2px,transparent 2px 4px)"></div>
<div class="a" style="left:128px;top:964px;width:18px;height:18px;border:1.5px solid #8f8f8f;background:linear-gradient(#ffffff 40%,#dedede)"></div>
<div class="a" style="left:132px;top:972px;width:10px;height:2px;background:#27468a"></div>
<div class="a" style="left:136px;top:968px;width:2px;height:10px;background:#27468a"></div>
<svg class="a" style="left:164px;top:955px;" width="27" height="35" viewBox="0 0 27 35">
<rect x="0.5" y="1.5" width="23.5" height="27" fill="url(#fo)" stroke="#cfa84e" stroke-width="1.2"/>
<rect x="13" y="3" width="10" height="2.2" fill="#fff4c0"/>
<rect x="13.5" y="21" width="9" height="7" fill="#b89048" opacity="0.45"/>
<rect x="23.5" y="15.5" width="3" height="13" fill="#d6ae52"/>
<rect x="22" y="17" width="2.2" height="4.5" fill="#fff"/><rect x="22" y="21.5" width="2.2" height="2.2" fill="#3cb060"/>
<path d="M0.5 1.5 H13 V28.5 H12.5 V33 H8 V28.5 H0.5 Z" fill="url(#fy)" stroke="#cfa84e" stroke-width="1.2"/>
</svg>
<div class="t" style="left:206.5px;top:957.70px;font-size:22.5px;line-height:30px;color:#000;transform:scaleX(0.9560);">cache (9)</div>
<div class="a" style="left:146px;top:1008px;width:14px;height:2px;background:repeating-linear-gradient(to right,#8e8e8e 0 2px,transparent 2px 4px)"></div>
<div class="a" style="left:128px;top:1000px;width:18px;height:18px;border:1.5px solid #8f8f8f;background:linear-gradient(#ffffff 40%,#dedede)"></div>
<div class="a" style="left:132px;top:1008px;width:10px;height:2px;background:#27468a"></div>
<div class="a" style="left:136px;top:1004px;width:2px;height:10px;background:#27468a"></div>
<svg class="a" style="left:164px;top:991px;" width="27" height="35" viewBox="0 0 27 35">
<rect x="0.5" y="1.5" width="23.5" height="27" fill="url(#fo)" stroke="#cfa84e" stroke-width="1.2"/>
<rect x="13" y="3" width="10" height="2.2" fill="#fff4c0"/>
<rect x="13.5" y="21" width="9" height="7" fill="#b89048" opacity="0.45"/>
<rect x="23.5" y="15.5" width="3" height="13" fill="#d6ae52"/>
<rect x="22" y="17" width="2.2" height="4.5" fill="#fff"/><rect x="22" y="21.5" width="2.2" height="2.2" fill="#3cb060"/>
<path d="M0.5 1.5 H13 V28.5 H12.5 V33 H8 V28.5 H0.5 Z" fill="url(#fy)" stroke="#cfa84e" stroke-width="1.2"/>
</svg>
<div class="t" style="left:206.5px;top:993.70px;font-size:22.5px;line-height:30px;color:#000;transform:scaleX(0.9560);">lib (22)</div>
<div class="a" style="left:137px;top:1044px;width:23px;height:2px;background:repeating-linear-gradient(to right,#8e8e8e 0 2px,transparent 2px 4px)"></div>
<svg class="a" style="left:164px;top:1027px;" width="27" height="35" viewBox="0 0 27 35">
<rect x="0.5" y="1.5" width="23.5" height="27" fill="url(#fo)" stroke="#cfa84e" stroke-width="1.2"/>
<rect x="13" y="3" width="10" height="2.2" fill="#fff4c0"/>
<rect x="13.5" y="21" width="9" height="7" fill="#b89048" opacity="0.45"/>
<rect x="23.5" y="15.5" width="3" height="13" fill="#d6ae52"/>
<rect x="22" y="17" width="2.2" height="4.5" fill="#fff"/><rect x="22" y="21.5" width="2.2" height="2.2" fill="#3cb060"/>
<path d="M0.5 1.5 H13 V28.5 H12.5 V33 H8 V28.5 H0.5 Z" fill="url(#fy)" stroke="#cfa84e" stroke-width="1.2"/>
</svg>
<div class="t" style="left:206.5px;top:1029.70px;font-size:22.5px;line-height:30px;color:#000;transform:scaleX(0.9560);">local (2)</div>
<div class="a" style="left:137px;top:1080px;width:23px;height:2px;background:repeating-linear-gradient(to right,#8e8e8e 0 2px,transparent 2px 4px)"></div>
<svg class="a" style="left:164px;top:1063px;" width="27" height="35" viewBox="0 0 27 35">
<rect x="0.5" y="1.5" width="23.5" height="27" fill="url(#fo)" stroke="#cfa84e" stroke-width="1.2"/>
<rect x="13" y="3" width="10" height="2.2" fill="#fff4c0"/>
<rect x="13.5" y="21" width="9" height="7" fill="#b89048" opacity="0.45"/>
<rect x="23.5" y="15.5" width="3" height="13" fill="#d6ae52"/>
<rect x="22" y="17" width="2.2" height="4.5" fill="#fff"/><rect x="22" y="21.5" width="2.2" height="2.2" fill="#3cb060"/>
<path d="M0.5 1.5 H13 V28.5 H12.5 V33 H8 V28.5 H0.5 Z" fill="url(#fy)" stroke="#cfa84e" stroke-width="1.2"/>
</svg>
<div class="t" style="left:206.5px;top:1065.70px;font-size:22.5px;line-height:30px;color:#000;transform:scaleX(0.9560);">lock (3)</div>
<div class="a" style="left:146px;top:1116px;width:14px;height:2px;background:repeating-linear-gradient(to right,#8e8e8e 0 2px,transparent 2px 4px)"></div>
<div class="a" style="left:128px;top:1108px;width:18px;height:18px;border:1.5px solid #8f8f8f;background:linear-gradient(#ffffff 40%,#dedede)"></div>
<div class="a" style="left:132px;top:1116px;width:10px;height:2px;background:#27468a"></div>
<svg class="a" style="left:164px;top:1099px;" width="27" height="35" viewBox="0 0 27 35">
<rect x="0.5" y="1.5" width="23.5" height="27" fill="url(#fo)" stroke="#cfa84e" stroke-width="1.2"/>
<rect x="13" y="3" width="10" height="2.2" fill="#fff4c0"/>
<rect x="13.5" y="21" width="9" height="7" fill="#b89048" opacity="0.45"/>
<rect x="23.5" y="15.5" width="3" height="13" fill="#d6ae52"/>
<rect x="22" y="17" width="2.2" height="4.5" fill="#fff"/><rect x="22" y="21.5" width="2.2" height="2.2" fill="#3cb060"/>
<path d="M0.5 1.5 H13 V28.5 H12.5 V33 H8 V28.5 H0.5 Z" fill="url(#fy)" stroke="#cfa84e" stroke-width="1.2"/>
</svg>
<div class="a" style="left:206px;top:1098px;width:82px;height:36px;background:#e0e0e0"></div>
<div class="t" style="left:206.5px;top:1101.70px;font-size:22.5px;line-height:30px;color:#000;transform:scaleX(0.9560);">log (34)</div>
<div class="a" style="left:175px;top:1152px;width:23px;height:2px;background:repeating-linear-gradient(to right,#8e8e8e 0 2px,transparent 2px 4px)"></div>
<svg class="a" style="left:202px;top:1135px;" width="27" height="35" viewBox="0 0 27 35">
<rect x="0.5" y="1.5" width="23.5" height="27" fill="url(#fo)" stroke="#cfa84e" stroke-width="1.2"/>
<rect x="13" y="3" width="10" height="2.2" fill="#fff4c0"/>
<rect x="13.5" y="21" width="9" height="7" fill="#b89048" opacity="0.45"/>
<rect x="23.5" y="15.5" width="3" height="13" fill="#d6ae52"/>
<rect x="22" y="17" width="2.2" height="4.5" fill="#fff"/><rect x="22" y="21.5" width="2.2" height="2.2" fill="#3cb060"/>
<path d="M0.5 1.5 H13 V28.5 H12.5 V33 H8 V28.5 H0.5 Z" fill="url(#fy)" stroke="#cfa84e" stroke-width="1.2"/>
</svg>
<div class="t" style="left:244.5px;top:1137.70px;font-size:22.5px;line-height:30px;color:#000;transform:scaleX(0.9560);">apt (3)</div>
<div class="a" style="left:175px;top:1188px;width:23px;height:2px;background:repeating-linear-gradient(to right,#8e8e8e 0 2px,transparent 2px 4px)"></div>
<svg class="a" style="left:202px;top:1171px;" width="27" height="35" viewBox="0 0 27 35">
<rect x="0.5" y="1.5" width="23.5" height="27" fill="url(#fo)" stroke="#cfa84e" stroke-width="1.2"/>
<rect x="13" y="3" width="10" height="2.2" fill="#fff4c0"/>
<rect x="13.5" y="21" width="9" height="7" fill="#b89048" opacity="0.45"/>
<rect x="23.5" y="15.5" width="3" height="13" fill="#d6ae52"/>
<rect x="22" y="17" width="2.2" height="4.5" fill="#fff"/><rect x="22" y="21.5" width="2.2" height="2.2" fill="#3cb060"/>
<path d="M0.5 1.5 H13 V28.5 H12.5 V33 H8 V28.5 H0.5 Z" fill="url(#fy)" stroke="#cfa84e" stroke-width="1.2"/>
</svg>
<div class="t" style="left:244.5px;top:1173.70px;font-size:22.5px;line-height:30px;color:#000;transform:scaleX(0.9560);">exim4 (5)</div>
<div class="a" style="left:175px;top:1224px;width:23px;height:2px;background:repeating-linear-gradient(to right,#8e8e8e 0 2px,transparent 2px 4px)"></div>
<svg class="a" style="left:202px;top:1207px;" width="27" height="35" viewBox="0 0 27 35">
<rect x="0.5" y="1.5" width="23.5" height="27" fill="url(#fo)" stroke="#cfa84e" stroke-width="1.2"/>
<rect x="13" y="3" width="10" height="2.2" fill="#fff4c0"/>
<rect x="13.5" y="21" width="9" height="7" fill="#b89048" opacity="0.45"/>
<rect x="23.5" y="15.5" width="3" height="13" fill="#d6ae52"/>
<rect x="22" y="17" width="2.2" height="4.5" fill="#fff"/><rect x="22" y="21.5" width="2.2" height="2.2" fill="#3cb060"/>
<path d="M0.5 1.5 H13 V28.5 H12.5 V33 H8 V28.5 H0.5 Z" fill="url(#fy)" stroke="#cfa84e" stroke-width="1.2"/>
</svg>
<div class="t" style="left:244.5px;top:1209.70px;font-size:22.5px;line-height:30px;color:#000;transform:scaleX(0.9560);">fsck (4)</div>
<div class="a" style="left:184px;top:1260px;width:14px;height:2px;background:repeating-linear-gradient(to right,#8e8e8e 0 2px,transparent 2px 4px)"></div>
<div class="a" style="left:166px;top:1252px;width:18px;height:18px;border:1.5px solid #8f8f8f;background:linear-gradient(#ffffff 40%,#dedede)"></div>
<div class="a" style="left:170px;top:1260px;width:10px;height:2px;background:#27468a"></div>
<div class="a" style="left:174px;top:1256px;width:2px;height:10px;background:#27468a"></div>
<svg class="a" style="left:202px;top:1243px;" width="27" height="35" viewBox="0 0 27 35">
<rect x="0.5" y="1.5" width="23.5" height="27" fill="url(#fo)" stroke="#cfa84e" stroke-width="1.2"/>
<rect x="13" y="3" width="10" height="2.2" fill="#fff4c0"/>
<rect x="13.5" y="21" width="9" height="7" fill="#b89048" opacity="0.45"/>
<rect x="23.5" y="15.5" width="3" height="13" fill="#d6ae52"/>
<rect x="22" y="17" width="2.2" height="4.5" fill="#fff"/><rect x="22" y="21.5" width="2.2" height="2.2" fill="#3cb060"/>
<path d="M0.5 1.5 H13 V28.5 H12.5 V33 H8 V28.5 H0.5 Z" fill="url(#fy)" stroke="#cfa84e" stroke-width="1.2"/>
</svg>
<div class="t" style="left:244.5px;top:1245.70px;font-size:22.5px;line-height:30px;color:#000;transform:scaleX(0.9560);">installer (8)</div>
<div class="a" style="left:175px;top:1296px;width:23px;height:2px;background:repeating-linear-gradient(to right,#8e8e8e 0 2px,transparent 2px 4px)"></div>
<svg class="a" style="left:202px;top:1279px;" width="27" height="35" viewBox="0 0 27 35">
<rect x="0.5" y="1.5" width="23.5" height="27" fill="url(#fo)" stroke="#cfa84e" stroke-width="1.2"/>
<rect x="13" y="3" width="10" height="2.2" fill="#fff4c0"/>
<rect x="13.5" y="21" width="9" height="7" fill="#b89048" opacity="0.45"/>
<rect x="23.5" y="15.5" width="3" height="13" fill="#d6ae52"/>
<rect x="22" y="17" width="2.2" height="4.5" fill="#fff"/><rect x="22" y="21.5" width="2.2" height="2.2" fill="#3cb060"/>
<path d="M0.5 1.5 H13 V28.5 H12.5 V33 H8 V28.5 H0.5 Z" fill="url(#fy)" stroke="#cfa84e" stroke-width="1.2"/>
</svg>
<div class="t" style="left:244.5px;top:1281.70px;font-size:22.5px;line-height:30px;color:#000;transform:scaleX(0.9560);">news (5)</div>
<div class="a" style="left:175px;top:1332px;width:23px;height:2px;background:repeating-linear-gradient(to right,#8e8e8e 0 2px,transparent 2px 4px)"></div>
<svg class="a" style="left:197px;top:1320px;" width="34" height="28" viewBox="0 0 34 28">
<path d="M4 2 H28 L31 6 V9 H4 Z" fill="#c03048"/><rect x="4" y="4" width="27" height="2" fill="#e86070"/>
<rect x="3" y="9" width="29" height="7" fill="#5070c8"/><rect x="3" y="11" width="29" height="2" fill="#90a8f0"/>
<rect x="3" y="16" width="29" height="8" fill="#48a048"/><rect x="3" y="18" width="29" height="2" fill="#90d880"/>
<rect x="14" y="2" width="5" height="22" fill="#d8c8a0" opacity="0.9"/>
</svg>
<div class="t" style="left:244.5px;top:1317.70px;font-size:22.5px;line-height:30px;color:#000;transform:scaleX(0.9560);">dmesg.1.gz (1)</div>
<div class="a" style="left:175px;top:1368px;width:23px;height:2px;background:repeating-linear-gradient(to right,#8e8e8e 0 2px,transparent 2px 4px)"></div>
<svg class="a" style="left:197px;top:1356px;" width="34" height="28" viewBox="0 0 34 28">
<path d="M4 2 H28 L31 6 V9 H4 Z" fill="#c03048"/><rect x="4" y="4" width="27" height="2" fill="#e86070"/>
<rect x="3" y="9" width="29" height="7" fill="#5070c8"/><rect x="3" y="11" width="29" height="2" fill="#90a8f0"/>
<rect x="3" y="16" width="29" height="8" fill="#48a048"/><rect x="3" y="18" width="29" height="2" fill="#90d880"/>
<rect x="14" y="2" width="5" height="22" fill="#d8c8a0" opacity="0.9"/>
</svg>
<div class="t" style="left:244.5px;top:1353.70px;font-size:22.5px;line-height:30px;color:#000;transform:scaleX(0.9560);">dmesg.2.gz (1)</div>
<div class="a" style="left:175px;top:1404px;width:23px;height:2px;background:repeating-linear-gradient(to right,#8e8e8e 0 2px,transparent 2px 4px)"></div>
<svg class="a" style="left:197px;top:1392px;" width="34" height="28" viewBox="0 0 34 28">
<path d="M4 2 H28 L31 6 V9 H4 Z" fill="#c03048"/><rect x="4" y="4" width="27" height="2" fill="#e86070"/>
<rect x="3" y="9" width="29" height="7" fill="#5070c8"/><rect x="3" y="11" width="29" height="2" fill="#90a8f0"/>
<rect x="3" y="16" width="29" height="8" fill="#48a048"/><rect x="3" y="18" width="29" height="2" fill="#90d880"/>
<rect x="14" y="2" width="5" height="22" fill="#d8c8a0" opacity="0.9"/>
</svg>
<div class="t" style="left:244.5px;top:1389.70px;font-size:22.5px;line-height:30px;color:#000;transform:scaleX(0.9560);">dmesg.3.gz (1)</div>
<div class="a" style="left:175px;top:1440px;width:23px;height:2px;background:repeating-linear-gradient(to right,#8e8e8e 0 2px,transparent 2px 4px)"></div>
<svg class="a" style="left:197px;top:1428px;" width="34" height="28" viewBox="0 0 34 28">
<path d="M4 2 H28 L31 6 V9 H4 Z" fill="#c03048"/><rect x="4" y="4" width="27" height="2" fill="#e86070"/>
<rect x="3" y="9" width="29" height="7" fill="#5070c8"/><rect x="3" y="11" width="29" height="2" fill="#90a8f0"/>
<rect x="3" y="16" width="29" height="8" fill="#48a048"/><rect x="3" y="18" width="29" height="2" fill="#90d880"/>
<rect x="14" y="2" width="5" height="22" fill="#d8c8a0" opacity="0.9"/>
</svg>
<div class="t" style="left:244.5px;top:1425.70px;font-size:22.5px;line-height:30px;color:#000;transform:scaleX(0.9560);">dmesg.4.gz (1)</div>
<div class="a" style="left:137px;top:1476px;width:23px;height:2px;background:repeating-linear-gradient(to right,#8e8e8e 0 2px,transparent 2px 4px)"></div>
<svg class="a" style="left:164px;top:1459px;" width="27" height="35" viewBox="0 0 27 35">
<rect x="0.5" y="1.5" width="23.5" height="27" fill="url(#fo)" stroke="#cfa84e" stroke-width="1.2"/>
<rect x="13" y="3" width="10" height="2.2" fill="#fff4c0"/>
<rect x="13.5" y="21" width="9" height="7" fill="#b89048" opacity="0.45"/>
<rect x="23.5" y="15.5" width="3" height="13" fill="#d6ae52"/>
<rect x="22" y="17" width="2.2" height="4.5" fill="#fff"/><rect x="22" y="21.5" width="2.2" height="2.2" fill="#3cb060"/>
<path d="M0.5 1.5 H13 V28.5 H12.5 V33 H8 V28.5 H0.5 Z" fill="url(#fy)" stroke="#cfa84e" stroke-width="1.2"/>
</svg>
<div class="t" style="left:206.5px;top:1461.70px;font-size:22.5px;line-height:30px;color:#000;transform:scaleX(0.9560);">mail (2)</div>
<div class="a" style="left:137px;top:1512px;width:23px;height:2px;background:repeating-linear-gradient(to right,#8e8e8e 0 2px,transparent 2px 4px)"></div>
<svg class="a" style="left:164px;top:1495px;" width="27" height="35" viewBox="0 0 27 35">
<rect x="0.5" y="1.5" width="23.5" height="27" fill="url(#fo)" stroke="#cfa84e" stroke-width="1.2"/>
<rect x="13" y="3" width="10" height="2.2" fill="#fff4c0"/>
<rect x="13.5" y="21" width="9" height="7" fill="#b89048" opacity="0.45"/>
<rect x="23.5" y="15.5" width="3" height="13" fill="#d6ae52"/>
<rect x="22" y="17" width="2.2" height="4.5" fill="#fff"/><rect x="22" y="21.5" width="2.2" height="2.2" fill="#3cb060"/>
<path d="M0.5 1.5 H13 V28.5 H12.5 V33 H8 V28.5 H0.5 Z" fill="url(#fy)" stroke="#cfa84e" stroke-width="1.2"/>
</svg>
<div class="t" style="left:206.5px;top:1497.70px;font-size:22.5px;line-height:30px;color:#000;transform:scaleX(0.9560);">opt (2)</div>
<div class="a" style="left:146px;top:1548px;width:14px;height:2px;background:repeating-linear-gradient(to right,#8e8e8e 0 2px,transparent 2px 4px)"></div>
<div class="a" style="left:128px;top:1540px;width:18px;height:18px;border:1.5px solid #8f8f8f;background:linear-gradient(#ffffff 40%,#dedede)"></div>
<div class="a" style="left:132px;top:1548px;width:10px;height:2px;background:#27468a"></div>
<div class="a" style="left:136px;top:1544px;width:2px;height:10px;background:#27468a"></div>
<svg class="a" style="left:164px;top:1531px;" width="27" height="35" viewBox="0 0 27 35">
<rect x="0.5" y="1.5" width="23.5" height="27" fill="url(#fo)" stroke="#cfa84e" stroke-width="1.2"/>
<rect x="13" y="3" width="10" height="2.2" fill="#fff4c0"/>
<rect x="13.5" y="21" width="9" height="7" fill="#b89048" opacity="0.45"/>
<rect x="23.5" y="15.5" width="3" height="13" fill="#d6ae52"/>
<rect x="22" y="17" width="2.2" height="4.5" fill="#fff"/><rect x="22" y="21.5" width="2.2" height="2.2" fill="#3cb060"/>
<path d="M0.5 1.5 H13 V28.5 H12.5 V33 H8 V28.5 H0.5 Z" fill="url(#fy)" stroke="#cfa84e" stroke-width="1.2"/>
</svg>
<div class="t" style="left:206.5px;top:1533.70px;font-size:22.5px;line-height:30px;color:#000;transform:scaleX(0.9560);">run (19)</div>
<div class="a" style="left:146px;top:1584px;width:14px;height:2px;background:repeating-linear-gradient(to right,#8e8e8e 0 2px,transparent 2px 4px)"></div>
<div class="a" style="left:128px;top:1576px;width:18px;height:18px;border:1.5px solid #8f8f8f;background:linear-gradient(#ffffff 40%,#dedede)"></div>
<div class="a" style="left:132px;top:1584px;width:10px;height:2px;background:#27468a"></div>
<div class="a" style="left:136px;top:1580px;width:2px;height:10px;background:#27468a"></div>
<svg class="a" style="left:164px;top:1567px;" width="27" height="35" viewBox="0 0 27 35">
<rect x="0.5" y="1.5" width="23.5" height="27" fill="url(#fo)" stroke="#cfa84e" stroke-width="1.2"/>
<rect x="13" y="3" width="10" height="2.2" fill="#fff4c0"/>
<rect x="13.5" y="21" width="9" height="7" fill="#b89048" opacity="0.45"/>
<rect x="23.5" y="15.5" width="3" height="13" fill="#d6ae52"/>
<rect x="22" y="17" width="2.2" height="4.5" fill="#fff"/><rect x="22" y="21.5" width="2.2" height="2.2" fill="#3cb060"/>
<path d="M0.5 1.5 H13 V28.5 H12.5 V33 H8 V28.5 H0.5 Z" fill="url(#fy)" stroke="#cfa84e" stroke-width="1.2"/>
</svg>
<div class="t" style="left:206.5px;top:1569.70px;font-size:22.5px;line-height:30px;color:#000;transform:scaleX(0.9560);">spool (6)</div>
<div class="a" style="left:137px;top:1620px;width:23px;height:2px;background:repeating-linear-gradient(to right,#8e8e8e 0 2px,transparent 2px 4px)"></div>
<svg class="a" style="left:164px;top:1603px;" width="27" height="35" viewBox="0 0 27 35">
<rect x="0.5" y="1.5" width="23.5" height="27" fill="url(#fo)" stroke="#cfa84e" stroke-width="1.2"/>
<rect x="13" y="3" width="10" height="2.2" fill="#fff4c0"/>
<rect x="13.5" y="21" width="9" height="7" fill="#b89048" opacity="0.45"/>
<rect x="23.5" y="15.5" width="3" height="13" fill="#d6ae52"/>
<rect x="22" y="17" width="2.2" height="4.5" fill="#fff"/><rect x="22" y="21.5" width="2.2" height="2.2" fill="#3cb060"/>
<path d="M0.5 1.5 H13 V28.5 H12.5 V33 H8 V28.5 H0.5 Z" fill="url(#fy)" stroke="#cfa84e" stroke-width="1.2"/>
</svg>
<div class="t" style="left:206.5px;top:1605.70px;font-size:22.5px;line-height:30px;color:#000;transform:scaleX(0.9560);">tmp (2)</div>
<div class="a" style="left:32px;top:1656px;width:14px;height:2px;background:repeating-linear-gradient(to right,#8e8e8e 0 2px,transparent 2px 4px)"></div>
<div class="a" style="left:14px;top:1648px;width:18px;height:18px;border:1.5px solid #8f8f8f;background:linear-gradient(#ffffff 40%,#dedede)"></div>
<div class="a" style="left:18px;top:1656px;width:10px;height:2px;background:#27468a"></div>
<div class="a" style="left:48px;top:1641px;width:28px;height:29px;border:1.5px solid #c8c8c8;background:linear-gradient(#f6f6f6,#e4e4e4)"></div>
<svg class="a" style="left:52px;top:1648px;" width="20" height="14" viewBox="0 0 20 14"><path d="M1 7 Q10 -2 19 7 Q10 16 1 7 Z" fill="none" stroke="#555" stroke-width="2"/><circle cx="10" cy="6.5" r="3" fill="#3d9ac8"/></svg>
<div class="t" style="left:92.5px;top:1641.70px;font-size:22.5px;line-height:30px;color:#000;transform:scaleX(0.8931);">Views</div>
<div class="a" style="left:70px;top:1692px;width:14px;height:2px;background:repeating-linear-gradient(to right,#8e8e8e 0 2px,transparent 2px 4px)"></div>
<div class="a" style="left:52px;top:1684px;width:18px;height:18px;border:1.5px solid #8f8f8f;background:linear-gradient(#ffffff 40%,#dedede)"></div>
<div class="a" style="left:56px;top:1692px;width:10px;height:2px;background:#27468a"></div>
<div class="a" style="left:60px;top:1688px;width:2px;height:10px;background:#27468a"></div>
<svg class="a" style="left:84px;top:1678px;" width="32" height="32" viewBox="0 0 32 32"><rect x="4" y="9" width="14" height="15" fill="#d8d8d8" stroke="#a0a0a0" stroke-width="1.2"/>
<circle cx="18" cy="8" r="6" fill="#e0e0e0" stroke="#90a8b0" stroke-width="1.5"/><circle cx="18" cy="8" r="2" fill="#60b0c0"/>
<circle cx="23" cy="22" r="6" fill="#c8e8a0" stroke="#a0c080" stroke-width="1.5"/><rect x="22" y="19" width="2" height="6" fill="#70a050"/>
<ellipse cx="16" cy="30" rx="14" ry="1.5" fill="#e4e4e4"/></svg>
<div class="t" style="left:130.5px;top:1677.70px;font-size:22.5px;line-height:30px;color:#000;transform:scaleX(0.9289);">File Types</div>
<div class="a" style="left:70px;top:1728px;width:14px;height:2px;background:repeating-linear-gradient(to right,#8e8e8e 0 2px,transparent 2px 4px)"></div>
<div class="a" style="left:52px;top:1720px;width:18px;height:18px;border:1.5px solid #8f8f8f;background:linear-gradient(#ffffff 40%,#dedede)"></div>
<div class="a" style="left:56px;top:1728px;width:10px;height:2px;background:#27468a"></div>
<div class="a" style="left:60px;top:1724px;width:2px;height:10px;background:#27468a"></div>
<svg class="a" style="left:87px;top:1713px;" width="26" height="32" viewBox="0 0 26 32"><path d="M1 1 H17 L24 8 V31 H1 Z" fill="#f8f8f8" stroke="#d0d0d0" stroke-width="1.2"/>
<path d="M2 14 L12 30 M12 15 L3 30" stroke="#e82020" stroke-width="3.2"/></svg>
<div class="t" style="left:130.5px;top:1713.70px;font-size:22.5px;line-height:30px;color:#000;transform:scaleX(0.9291);">Deleted Files</div>
<div class="a" style="left:70px;top:1764px;width:14px;height:2px;background:repeating-linear-gradient(to right,#8e8e8e 0 2px,transparent 2px 4px)"></div>
<div class="a" style="left:52px;top:1756px;width:18px;height:18px;border:1.5px solid #8f8f8f;background:linear-gradient(#ffffff 40%,#dedede)"></div>
<div class="a" style="left:56px;top:1764px;width:10px;height:2px;background:#27468a"></div>
<div class="a" style="left:60px;top:1760px;width:2px;height:10px;background:#27468a"></div>
<div class="t" style="left:86px;top:1748.03px;font-size:25px;line-height:33px;color:#111;transform:scaleX(0.9517);font-weight:bold;">MB</div>
<div class="t" style="left:130.5px;top:1749.70px;font-size:22.5px;line-height:30px;color:#000;transform:scaleX(0.8786);">File Size</div>
<div class="a" style="left:32px;top:1800px;width:14px;height:2px;background:repeating-linear-gradient(to right,#8e8e8e 0 2px,transparent 2px 4px)"></div>
<div class="a" style="left:14px;top:1792px;width:18px;height:18px;border:1.5px solid #8f8f8f;background:linear-gradient(#ffffff 40%,#dedede)"></div>
<div class="a" style="left:18px;top:1800px;width:10px;height:2px;background:#27468a"></div>
<div class="a" style="left:48px;top:1785px;width:28px;height:30px;border:1.5px solid #bdbdbd;background:linear-gradient(#f2f2f2,#dcdcdc)"></div>
<svg class="a" style="left:53px;top:1791px;" width="18" height="18" viewBox="0 0 18 18"><path d="M1 2 H13 M1 6 H7 M1 10 H15 M1 14 H13" stroke="#555" stroke-width="2.2"/></svg>
<div class="t" style="left:92.5px;top:1785.70px;font-size:22.5px;line-height:30px;color:#000;transform:scaleX(0.9330);">Results</div>
<div class="a" style="left:70px;top:1836px;width:14px;height:2px;background:repeating-linear-gradient(to right,#8e8e8e 0 2px,transparent 2px 4px)"></div>
<div class="a" style="left:52px;top:1828px;width:18px;height:18px;border:1.5px solid #8f8f8f;background:linear-gradient(#ffffff 40%,#dedede)"></div>
<div class="a" style="left:56px;top:1836px;width:10px;height:2px;background:#27468a"></div>
<div class="a" style="left:86px;top:1821px;width:28px;height:30px;border-radius:2px;background:#2b2b2b;border:1.5px solid #555"></div>
<svg class="a" style="left:91px;top:1827px;" width="18" height="18" viewBox="0 0 18 18"><path d="M1 2 H13 M1 6 H7 M1 10 H15 M1 14 H13" stroke="#3fcf9a" stroke-width="2.4"/></svg>
<div class="t" style="left:130.5px;top:1821.70px;font-size:22.5px;line-height:30px;color:#000;transform:scaleX(0.9928);">Extracted Content</div>
<svg width="0" height="0" style="position:absolute"><defs><linearGradient id="fg" x1="0" y1="0" x2="1" y2="1"><stop offset="0" stop-color="#fff"/><stop offset="1" stop-color="#e0e0e0"/></linearGradient></defs></svg>
<div class="a" style="left:702px;top:174px;width:134px;height:40px;border:2px solid #3a7bb4;border-bottom:none;background:linear-gradient(#eef5fc,#dce9f8)"></div>
<div class="t" style="left:717px;top:179.90px;font-size:22.5px;line-height:30px;color:#000;transform:scaleX(0.9686);">Listing</div>
<svg class="a" style="left:3224px;top:177px;" width="14" height="22" viewBox="0 0 14 22"><path d="M12 1 L2 11 L12 21 Z" fill="#c8c8c8"/></svg>
<svg class="a" style="left:3260px;top:177px;" width="14" height="22" viewBox="0 0 14 22"><path d="M2 1 L12 11 L2 21 Z" fill="#c8c8c8"/></svg>
<svg class="a" style="left:3290px;top:181px;" width="24" height="12" viewBox="0 0 24 12"><path d="M1 1 H22 L11.5 11 Z" fill="#555"/></svg>
<div class="a" style="left:3328px;top:180px;width:20px;height:16px;border:2px solid #555;border-top-width:3px"></div>
<div class="a" style="left:836px;top:212px;width:2518px;height:2px;background:#878c95"></div>
<div class="a" style="left:702px;top:213px;width:2px;height:407px;background:#878c95"></div>
<div class="a" style="left:3352px;top:212px;width:2px;height:408px;background:#878c95"></div>
<div class="a" style="left:702px;top:618px;width:2652px;height:2px;background:#878c95"></div>
<div class="t" style="left:704.5px;top:213.90px;font-size:22.5px;line-height:30px;color:#000;transform:scaleX(0.9683);">/img_2.img/var/log</div>
<div class="t" style="left:3246px;top:213.40px;font-size:22.5px;line-height:30px;color:#000;transform:scaleX(0.9510);">34</div>
<div class="t" style="left:3281.7px;top:213.40px;font-size:22.5px;line-height:30px;color:#000;transform:scaleX(0.9130);">Results</div>
<div class="a" style="left:704px;top:285px;width:2642px;height:1px;background:#d6d6d6"></div>
<div class="a" style="left:704px;top:286px;width:2642px;height:2px;background:#fff"></div>
<div class="a" style="left:705px;top:245px;width:77px;height:43px;background:#fff;border:1px solid #d9d9d9;border-bottom:none"></div>
<div class="a" style="left:782px;top:248px;width:113px;height:37px;background:#f0f0f0;border:1.5px solid #d9d9d9;border-bottom:none"></div>
<div class="t" style="left:716px;top:249.90px;font-size:22.5px;line-height:30px;color:#000;transform:scaleX(0.9061);">Table</div>
<div class="t" style="left:792px;top:253.40px;font-size:22.5px;line-height:30px;color:#000;transform:scaleX(0.9091);">Thumbnail</div>
<div class="a" style="left:3112px;top:296px;width:238px;height:42px;background:#e1e1e1;border:2px solid #a9a9a9"></div>
<div class="t" style="left:3140.6px;top:301.90px;font-size:22.5px;line-height:30px;color:#000;transform:scaleX(0.9066);">Save Table as CSV</div>
<div class="a" style="left:704px;top:346px;width:2616px;height:218px;background:#fff"></div>
<div class="a" style="left:704px;top:394px;width:2616px;height:2px;background:#e3e3e3"></div>
<div class="a" style="left:1015px;top:346px;width:2px;height:48px;background:#e6e6e6"></div>
<div class="a" style="left:1016px;top:396px;width:1px;height:167px;background:#ececec"></div>
<div class="a" style="left:1059px;top:346px;width:2px;height:48px;background:#e6e6e6"></div>
<div class="a" style="left:1060px;top:396px;width:1px;height:167px;background:#ececec"></div>
<div class="a" style="left:1104px;top:346px;width:2px;height:48px;background:#e6e6e6"></div>
<div class="a" style="left:1105px;top:396px;width:1px;height:167px;background:#ececec"></div>
<div class="a" style="left:1396px;top:346px;width:2px;height:48px;background:#e6e6e6"></div>
<div class="a" style="left:1397px;top:396px;width:1px;height:167px;background:#ececec"></div>
<div class="a" style="left:1689px;top:346px;width:2px;height:48px;background:#e6e6e6"></div>
<div class="a" style="left:1690px;top:396px;width:1px;height:167px;background:#ececec"></div>
<div class="a" style="left:1980px;top:346px;width:2px;height:48px;background:#e6e6e6"></div>
<div class="a" style="left:1981px;top:396px;width:1px;height:167px;background:#ececec"></div>
<div class="a" style="left:2225px;top:346px;width:2px;height:48px;background:#e6e6e6"></div>
<div class="a" style="left:2226px;top:396px;width:1px;height:167px;background:#ececec"></div>
<div class="a" style="left:2357px;top:346px;width:2px;height:48px;background:#e6e6e6"></div>
<div class="a" style="left:2358px;top:396px;width:1px;height:167px;background:#ececec"></div>
<div class="a" style="left:2507px;top:346px;width:2px;height:48px;background:#e6e6e6"></div>
<div class="a" style="left:2508px;top:396px;width:1px;height:167px;background:#ececec"></div>
<div class="a" style="left:2653px;top:346px;width:2px;height:48px;background:#e6e6e6"></div>
<div class="a" style="left:2654px;top:396px;width:1px;height:167px;background:#ececec"></div>
<div class="a" style="left:2785px;top:346px;width:2px;height:48px;background:#e6e6e6"></div>
<div class="a" style="left:2786px;top:396px;width:1px;height:167px;background:#ececec"></div>
<div class="a" style="left:3207px;top:346px;width:2px;height:48px;background:#e6e6e6"></div>
<div class="a" style="left:3208px;top:396px;width:1px;height:167px;background:#ececec"></div>
<div class="t" style="left:712px;top:357.90px;font-size:22.5px;line-height:30px;color:#000;transform:scaleX(0.9160);">Name</div>
<div class="t" style="left:1026.7px;top:357.90px;font-size:22.5px;line-height:30px;color:#000;transform:scaleX(0.9160);">S</div>
<div class="t" style="left:1071px;top:357.90px;font-size:22.5px;line-height:30px;color:#000;transform:scaleX(0.9160);">C</div>
<div class="t" style="left:1116px;top:357.90px;font-size:22.5px;line-height:30px;color:#000;transform:scaleX(0.9160);">Modified Time</div>
<div class="t" style="left:1408.7px;top:357.90px;font-size:22.5px;line-height:30px;color:#000;transform:scaleX(0.9160);">Change Time</div>
<div class="t" style="left:1702px;top:357.90px;font-size:22.5px;line-height:30px;color:#000;transform:scaleX(0.9160);">Access Time</div>
<div class="t" style="left:1993px;top:357.90px;font-size:22.5px;line-height:30px;color:#000;transform:scaleX(0.9160);">Created Time</div>
<div class="t" style="left:2236px;top:357.90px;font-size:22.5px;line-height:30px;color:#000;transform:scaleX(0.9160);">Size</div>
<div class="t" style="left:2367.6px;top:357.90px;font-size:22.5px;line-height:30px;color:#000;transform:scaleX(0.9160);">Flags(Dir)</div>
<div class="t" style="left:2517.6px;top:357.90px;font-size:22.5px;line-height:30px;color:#000;transform:scaleX(0.9160);">Flags(Meta)</div>
<div class="t" style="left:2664px;top:357.90px;font-size:22.5px;line-height:30px;color:#000;transform:scaleX(0.9160);">Known</div>
<div class="t" style="left:2795.6px;top:357.90px;font-size:22.5px;line-height:30px;color:#000;transform:scaleX(0.9160);">MD5 Hash</div>
<div class="t" style="left:3218px;top:357.90px;font-size:22.5px;line-height:30px;color:#000;transform:scaleX(0.9160);">MIME Type</div>
<div class="a" style="left:3320px;top:348px;width:30px;height:46px;background:#e4e4e4;border:1.5px solid #ababab"></div>
<svg class="a" style="left:3318px;top:350px;" width="38" height="38" viewBox="0 0 38 38"><rect x="6" y="4" width="28" height="28" fill="#d4d0f4" stroke="#7c7ca4" stroke-width="2"/><path d="M25 5 V31 M7 13 H33 M7 22 H33" stroke="#9c9cc0" stroke-width="1.5"/><path d="M13 4 V31 M2 17 H24 M6 9 L21 25 M21 9 L6 25" stroke="#e49a1c" stroke-width="1.8"/><circle cx="13" cy="17" r="4.5" fill="#ffe040"/><path d="M14 18 L32 36" stroke="#111" stroke-width="3.2"/></svg>
<div class="a" style="left:704px;top:439px;width:2616px;height:1px;background:#ececec"></div>
<svg class="a" style="left:730px;top:401px;" width="26" height="33" viewBox="0 0 26 33"><path d="M1 1 H17 L24 8 V31 H1 Z" fill="url(#fg)" stroke="#c8c8c8" stroke-width="1.2"/><path d="M17 1 V8 H24" fill="#eee" stroke="#d0d0d0" stroke-width="1"/></svg>
<div class="t" style="left:763px;top:402.90px;font-size:22.5px;line-height:30px;color:#000;transform:scaleX(0.9820);">aptitude</div>
<div class="t" style="left:1113px;top:402.90px;font-size:22.5px;line-height:30px;color:#6d6d6d;transform:scaleX(0.9580);">2011-01-18 08:29:03 GMT</div>
<div class="t" style="left:1405px;top:402.90px;font-size:22.5px;line-height:30px;color:#6d6d6d;transform:scaleX(0.9580);">2011-01-18 08:29:03 GMT</div>
<div class="t" style="left:1698px;top:402.90px;font-size:22.5px;line-height:30px;color:#6d6d6d;transform:scaleX(0.9580);">2011-01-18 08:25:16 GMT</div>
<div class="t" style="left:1989px;top:402.90px;font-size:22.5px;line-height:30px;color:#6d6d6d;transform:scaleX(0.9580);">0000-00-00 00:00:00</div>
<div class="t" style="left:2234px;top:402.90px;font-size:22.5px;line-height:30px;color:#6d6d6d;transform:scaleX(0.9580);">2842</div>
<div class="t" style="left:2366px;top:402.90px;font-size:22.5px;line-height:30px;color:#6d6d6d;transform:scaleX(0.9580);">Allocated</div>
<div class="t" style="left:2516px;top:402.90px;font-size:22.5px;line-height:30px;color:#6d6d6d;transform:scaleX(0.9580);">Allocated</div>
<div class="t" style="left:2662px;top:402.90px;font-size:22.5px;line-height:30px;color:#6d6d6d;transform:scaleX(0.9580);">unknown</div>
<div class="t" style="left:2794px;top:402.90px;font-size:22.5px;line-height:30px;color:#6d6d6d;transform:scaleX(0.9580);">765760729266de63f62a3669b962e4ab</div>
<div class="t" style="left:3216px;top:402.90px;font-size:22.5px;line-height:30px;color:#6d6d6d;transform:scaleX(0.9580);">text/plain</div>
<div class="a" style="left:704px;top:483px;width:2616px;height:1px;background:#ececec"></div>
<div class="a" style="left:704px;top:440px;width:311px;height:42px;background:#3378d8"></div>
<div class="a" style="left:1017px;top:440px;width:42px;height:42px;background:#3378d8"></div>
<div class="a" style="left:1061px;top:440px;width:43px;height:42px;background:#3378d8"></div>
<div class="a" style="left:1106px;top:440px;width:290px;height:42px;background:#3378d8"></div>
<div class="a" style="left:1398px;top:440px;width:291px;height:42px;background:#3378d8"></div>
<div class="a" style="left:1691px;top:440px;width:289px;height:42px;background:#3378d8"></div>
<div class="a" style="left:1982px;top:440px;width:243px;height:42px;background:#3378d8"></div>
<div class="a" style="left:2227px;top:440px;width:130px;height:42px;background:#3378d8"></div>
<div class="a" style="left:2359px;top:440px;width:148px;height:42px;background:#3378d8"></div>
<div class="a" style="left:2509px;top:440px;width:144px;height:42px;background:#3378d8"></div>
<div class="a" style="left:2655px;top:440px;width:130px;height:42px;background:#3378d8"></div>
<div class="a" style="left:2787px;top:440px;width:420px;height:42px;background:#3378d8"></div>
<div class="a" style="left:3209px;top:440px;width:110px;height:42px;background:#3378d8"></div>
<div class="a" style="left:705px;top:440px;width:311px;height:42px;border:2px dotted #000;outline:0"></div>
<svg class="a" style="left:730px;top:444px;" width="26" height="33" viewBox="0 0 26 33"><rect x="1" y="1" width="23" height="30" fill="#fff" stroke="#b8b8b8" stroke-width="2"/><rect x="6" y="6" width="15" height="1.5" fill="#9ec0e8"/><rect x="4" y="6" width="1.2" height="1.5" fill="#666"/><rect x="6" y="10" width="15" height="1.5" fill="#9ec0e8"/><rect x="4" y="10" width="1.2" height="1.5" fill="#666"/><rect x="6" y="14" width="15" height="1.5" fill="#9ec0e8"/><rect x="4" y="14" width="1.2" height="1.5" fill="#666"/><rect x="6" y="18" width="15" height="1.5" fill="#9ec0e8"/><rect x="4" y="18" width="1.2" height="1.5" fill="#666"/><rect x="6" y="22" width="15" height="1.5" fill="#9ec0e8"/><rect x="4" y="22" width="1.2" height="1.5" fill="#666"/><rect x="6" y="26" width="15" height="1.5" fill="#9ec0e8"/><rect x="4" y="26" width="1.2" height="1.5" fill="#666"/></svg>
<div class="t" style="left:763px;top:446.40px;font-size:22.5px;line-height:30px;color:#fff;transform:scaleX(0.9820);">auth.log</div>
<div class="t" style="left:1113px;top:446.40px;font-size:22.5px;line-height:30px;color:#fff;transform:scaleX(0.9580);">2011-02-06 14:21:10 GMT</div>
<div class="t" style="left:1405px;top:446.40px;font-size:22.5px;line-height:30px;color:#fff;transform:scaleX(0.9580);">2011-02-06 14:21:10 GMT</div>
<div class="t" style="left:1698px;top:446.40px;font-size:22.5px;line-height:30px;color:#fff;transform:scaleX(0.9580);">2011-01-18 08:31:30 GMT</div>
<div class="t" style="left:1989px;top:446.40px;font-size:22.5px;line-height:30px;color:#fff;transform:scaleX(0.9580);">0000-00-00 00:00:00</div>
<div class="t" style="left:2234px;top:446.40px;font-size:22.5px;line-height:30px;color:#fff;transform:scaleX(0.9580);">10022</div>
<div class="t" style="left:2366px;top:446.40px;font-size:22.5px;line-height:30px;color:#fff;transform:scaleX(0.9580);">Allocated</div>
<div class="t" style="left:2516px;top:446.40px;font-size:22.5px;line-height:30px;color:#fff;transform:scaleX(0.9580);">Allocated</div>
<div class="t" style="left:2662px;top:446.40px;font-size:22.5px;line-height:30px;color:#fff;transform:scaleX(0.9580);">unknown</div>
<div class="t" style="left:2794px;top:446.40px;font-size:22.5px;line-height:30px;color:#fff;transform:scaleX(0.9580);">89e31ab9685796619dc8441ceba11073</div>
<div class="t" style="left:3216px;top:446.40px;font-size:22.5px;line-height:30px;color:#fff;transform:scaleX(0.9580);">text/x-log</div>
<div class="a" style="left:704px;top:527px;width:2616px;height:1px;background:#ececec"></div>
<svg class="a" style="left:730px;top:488px;" width="26" height="33" viewBox="0 0 26 33"><path d="M1 1 H17 L24 8 V31 H1 Z" fill="url(#fg)" stroke="#c8c8c8" stroke-width="1.2"/><path d="M17 1 V8 H24" fill="#eee" stroke="#d0d0d0" stroke-width="1"/></svg>
<div class="t" style="left:763px;top:489.90px;font-size:22.5px;line-height:30px;color:#000;transform:scaleX(0.9820);">boot</div>
<div class="t" style="left:1113px;top:489.90px;font-size:22.5px;line-height:30px;color:#6d6d6d;transform:scaleX(0.9580);">2011-01-18 08:17:50 GMT</div>
<div class="t" style="left:1405px;top:489.90px;font-size:22.5px;line-height:30px;color:#6d6d6d;transform:scaleX(0.9580);">2011-01-18 08:17:50 GMT</div>
<div class="t" style="left:1698px;top:489.90px;font-size:22.5px;line-height:30px;color:#6d6d6d;transform:scaleX(0.9580);">2011-01-18 08:17:50 GMT</div>
<div class="t" style="left:1989px;top:489.90px;font-size:22.5px;line-height:30px;color:#6d6d6d;transform:scaleX(0.9580);">0000-00-00 00:00:00</div>
<div class="t" style="left:2234px;top:489.90px;font-size:22.5px;line-height:30px;color:#6d6d6d;transform:scaleX(0.9580);">31</div>
<div class="t" style="left:2366px;top:489.90px;font-size:22.5px;line-height:30px;color:#6d6d6d;transform:scaleX(0.9580);">Allocated</div>
<div class="t" style="left:2516px;top:489.90px;font-size:22.5px;line-height:30px;color:#6d6d6d;transform:scaleX(0.9580);">Allocated</div>
<div class="t" style="left:2662px;top:489.90px;font-size:22.5px;line-height:30px;color:#6d6d6d;transform:scaleX(0.9580);">unknown</div>
<div class="t" style="left:2794px;top:489.90px;font-size:22.5px;line-height:30px;color:#6d6d6d;transform:scaleX(0.9580);">e5e8d0a928a26abf9a04ec92c7814ba6</div>
<div class="t" style="left:3216px;top:489.90px;font-size:22.5px;line-height:30px;color:#6d6d6d;transform:scaleX(0.9580);">text/plain</div>
<svg class="a" style="left:730px;top:531px;" width="26" height="33" viewBox="0 0 26 33"><path d="M1 1 H17 L24 8 V31 H1 Z" fill="url(#fg)" stroke="#c8c8c8" stroke-width="1.2"/><path d="M17 1 V8 H24" fill="#eee" stroke="#d0d0d0" stroke-width="1"/></svg>
<div class="t" style="left:763px;top:533.40px;font-size:22.5px;line-height:30px;color:#000;transform:scaleX(0.9820);">btmp</div>
<div class="t" style="left:1113px;top:533.40px;font-size:22.5px;line-height:30px;color:#6d6d6d;transform:scaleX(0.9580);">2011-01-18 16:13:31 GMT</div>
<div class="t" style="left:1405px;top:533.40px;font-size:22.5px;line-height:30px;color:#6d6d6d;transform:scaleX(0.9580);">2011-01-18 16:13:31 GMT</div>
<div class="t" style="left:1698px;top:533.40px;font-size:22.5px;line-height:30px;color:#6d6d6d;transform:scaleX(0.9580);">2011-01-18 08:16:57 GMT</div>
<div class="t" style="left:1989px;top:533.40px;font-size:22.5px;line-height:30px;color:#6d6d6d;transform:scaleX(0.9580);">0000-00-00 00:00:00</div>
<div class="t" style="left:2234px;top:533.40px;font-size:22.5px;line-height:30px;color:#6d6d6d;transform:scaleX(0.9580);">384</div>
<div class="t" style="left:2366px;top:533.40px;font-size:22.5px;line-height:30px;color:#6d6d6d;transform:scaleX(0.9580);">Allocated</div>
<div class="t" style="left:2516px;top:533.40px;font-size:22.5px;line-height:30px;color:#6d6d6d;transform:scaleX(0.9580);">Allocated</div>
<div class="t" style="left:2662px;top:533.40px;font-size:22.5px;line-height:30px;color:#6d6d6d;transform:scaleX(0.9580);">unknown</div>
<div class="t" style="left:2794px;top:533.40px;font-size:22.5px;line-height:30px;color:#6d6d6d;transform:scaleX(0.9580);">12e243eb20e789a2e15e573511c90ca3</div>
<div class="t" style="left:3216px;top:533.40px;font-size:22.5px;line-height:30px;color:#6d6d6d;transform:scaleX(0.9580);">application</div>
<div class="a" style="left:3320px;top:396px;width:32px;height:168px;background:#f0f0f0"></div>
<div class="a" style="left:3322px;top:449px;width:29px;height:20px;background:#cdcdcd"></div>
<svg class="a" style="left:3328px;top:408px;" width="16" height="14" viewBox="0 0 16 14"><path d="M1.5 11 L8 4 L14.5 11" stroke="#5c5c5c" stroke-width="4" fill="none"/></svg>
<svg class="a" style="left:3328px;top:539px;" width="16" height="14" viewBox="0 0 16 14"><path d="M1.5 3 L8 10 L14.5 3" stroke="#5c5c5c" stroke-width="4" fill="none"/></svg>
<div class="a" style="left:704px;top:564px;width:2648px;height:30px;background:#f0f0f0"></div>
<div class="a" style="left:738px;top:564px;width:2286px;height:30px;background:#cdcdcd"></div>
<svg class="a" style="left:712px;top:571px;" width="14" height="16" viewBox="0 0 14 16"><path d="M11 1.5 L4 8 L11 14.5" stroke="#5c5c5c" stroke-width="4" fill="none"/></svg>
<svg class="a" style="left:3294px;top:571px;" width="14" height="16" viewBox="0 0 14 16"><path d="M3 1.5 L10 8 L3 14.5" stroke="#5c5c5c" stroke-width="4" fill="none"/></svg>
<div class="a" style="left:702px;top:407px;width:2656px;height:94px;border:3px solid #e8401e"></div>
<div class="a" style="left:704px;top:670.5px;width:2645px;height:2px;background:#d6d6d6"></div>
<div class="a" style="left:704px;top:672.5px;width:2645px;height:1.5px;background:#fff"></div>
<div class="a" style="left:707px;top:635px;width:56px;height:37px;background:#f0f0f0;border:2px solid #d9d9d9;border-bottom:none"></div>
<div class="a" style="left:763px;top:631px;width:69px;height:42.5px;background:#fff;border:2px solid #d9d9d9;border-bottom:none"></div>
<div class="a" style="left:832px;top:635px;width:124px;height:37px;background:#f0f0f0;border:2px solid #d9d9d9;border-bottom:none"></div>
<div class="a" style="left:956px;top:635px;width:107px;height:37px;background:#f0f0f0;border:2px solid #d9d9d9;border-bottom:none"></div>
<div class="a" style="left:1063px;top:635px;width:152px;height:37px;background:#f0f0f0;border:2px solid #d9d9d9;border-bottom:none"></div>
<div class="a" style="left:1215px;top:635px;width:92px;height:37px;background:#f0f0f0;border:2px solid #d9d9d9;border-bottom:none"></div>
<div class="a" style="left:1307px;top:635px;width:138px;height:37px;background:#f0f0f0;border:2px solid #d9d9d9;border-bottom:none"></div>
<div class="a" style="left:1445px;top:635px;width:200px;height:37px;background:#f0f0f0;border:2px solid #d9d9d9;border-bottom:none"></div>
<div class="a" style="left:702px;top:674px;width:2652px;height:2px;background:#80858e"></div>
<div class="t" style="left:717px;top:639.90px;font-size:22.5px;line-height:30px;color:#000;transform:scaleX(0.9497);">Hex</div>
<div class="t" style="left:774px;top:636.90px;font-size:22.5px;line-height:30px;color:#000;transform:scaleX(1.1198);">Text</div>
<div class="t" style="left:842px;top:639.90px;font-size:22.5px;line-height:30px;color:#a3a3a3;transform:scaleX(0.9358);">Application</div>
<div class="t" style="left:966px;top:639.90px;font-size:22.5px;line-height:30px;color:#a3a3a3;transform:scaleX(0.9310);">Message</div>
<div class="t" style="left:1073px;top:639.90px;font-size:22.5px;line-height:30px;color:#000;transform:scaleX(0.9610);">File Metadata</div>
<div class="t" style="left:1226px;top:639.90px;font-size:22.5px;line-height:30px;color:#000;transform:scaleX(0.9330);">Results</div>
<div class="t" style="left:1318px;top:639.90px;font-size:22.5px;line-height:30px;color:#000;transform:scaleX(0.9677);">Annotations</div>
<div class="t" style="left:1456px;top:639.90px;font-size:22.5px;line-height:30px;color:#000;transform:scaleX(0.9602);">Other Occurrences</div>
<div class="a" style="left:702px;top:674px;width:2px;height:50px;background:#80858e"></div>
<div class="a" style="left:3352px;top:674px;width:2px;height:50px;background:#80858e"></div>
<div class="a" style="left:706px;top:718px;width:2642px;height:2px;background:#d6d6d6"></div>
<div class="a" style="left:706px;top:720px;width:2642px;height:2px;background:#fff"></div>
<div class="a" style="left:708px;top:683px;width:85px;height:36px;background:#f0f0f0;border:2px solid #d9d9d9;border-bottom:none"></div>
<div class="a" style="left:793px;top:679px;width:155px;height:41px;background:#fff;border:2px solid #d9d9d9;border-bottom:none"></div>
<div class="a" style="left:948px;top:683px;width:123px;height:36px;background:#f0f0f0;border:2px solid #d9d9d9;border-bottom:none"></div>
<div class="t" style="left:719px;top:686.90px;font-size:22.5px;line-height:30px;color:#000;transform:scaleX(0.9425);">Strings</div>
<div class="t" style="left:806px;top:682.90px;font-size:22.5px;line-height:30px;color:#000;">Indexed Text</div>
<div class="t" style="left:957px;top:684.90px;font-size:22.5px;line-height:30px;color:#a3a3a3;transform:scaleX(0.9524);">Translation</div>
<div class="a" style="left:702px;top:722px;width:2652px;height:4px;background:#80858e"></div>
<div class="a" style="left:702px;top:722px;width:6px;height:1130px;background:#80858e"></div>
<div class="a" style="left:3348px;top:722px;width:6px;height:1130px;background:#80858e"></div>
<div class="a" style="left:702px;top:1846px;width:2652px;height:6px;background:#80858e"></div>
<div class="a" style="left:708px;top:726px;width:2640px;height:54px;background:#f0f0f0"></div>
<div class="a" style="left:708px;top:780px;width:2640px;height:2px;background:#8e939b"></div>
<div class="a" style="left:708px;top:782px;width:2640px;height:12px;background:#f0f0f0"></div>
<div class="a" style="left:708px;top:794px;width:2640px;height:2px;background:#8e939b"></div>
<div class="t" style="left:727px;top:735.90px;font-size:22.5px;line-height:30px;color:#000;transform:scaleX(0.9594);">Matches on page:</div>
<div class="t" style="left:935px;top:735.90px;font-size:22.5px;line-height:30px;color:#000;transform:scaleX(1.0677);">-</div>
<div class="t" style="left:975.4px;top:735.90px;font-size:22.5px;line-height:30px;color:#000;transform:scaleX(0.9593);">of</div>
<div class="t" style="left:1030px;top:735.90px;font-size:22.5px;line-height:30px;color:#000;transform:scaleX(1.0677);">-</div>
<div class="t" style="left:1070.6px;top:735.90px;font-size:22.5px;line-height:30px;color:#000;transform:scaleX(0.9303);">Match</div>
<div class="a" style="left:1140px;top:730px;width:85px;height:39px;border:1.5px solid #dcdcdc;border-radius:3px;background:#f0f0f0"></div>
<div class="a" style="left:1183px;top:731px;width:1.5px;height:37px;background:#dcdcdc"></div>
<svg class="a" style="left:1148px;top:738px;" width="28" height="24" viewBox="0 0 28 24"><path d="M12 2 L3 12 L12 22 M3 12 H25" stroke="#c6c6c6" stroke-width="4.5" fill="none"/></svg>
<svg class="a" style="left:1191px;top:738px;" width="28" height="24" viewBox="0 0 28 24"><path d="M16 2 L25 12 L16 22 M25 12 H3" stroke="#c6c6c6" stroke-width="4.5" fill="none"/></svg>
<div class="a" style="left:1266px;top:726px;width:2px;height:50px;background:#a0a0a0"></div>
<div class="t" style="left:1304.7px;top:735.90px;font-size:22.5px;line-height:30px;color:#000;transform:scaleX(0.9354);">Page:</div>
<div class="t" style="left:1375.4px;top:735.90px;font-size:22.5px;line-height:30px;color:#000;transform:scaleX(0.7991);">1</div>
<div class="t" style="left:1404.6px;top:735.90px;font-size:22.5px;line-height:30px;color:#000;transform:scaleX(0.9593);">of</div>
<div class="t" style="left:1439.5px;top:735.90px;font-size:22.5px;line-height:30px;color:#000;transform:scaleX(0.7991);">1</div>
<div class="t" style="left:1484.2px;top:735.90px;font-size:22.5px;line-height:30px;color:#000;transform:scaleX(0.9135);">Page</div>
<div class="a" style="left:1546px;top:730px;width:87px;height:39px;border:1.5px solid #dcdcdc;border-radius:3px;background:#f0f0f0"></div>
<div class="a" style="left:1590px;top:731px;width:1.5px;height:37px;background:#dcdcdc"></div>
<svg class="a" style="left:1554px;top:738px;" width="28" height="24" viewBox="0 0 28 24"><path d="M12 2 L3 12 L12 22 M3 12 H25" stroke="#c6c6c6" stroke-width="4.5" fill="none"/></svg>
<svg class="a" style="left:1598px;top:738px;" width="28" height="24" viewBox="0 0 28 24"><path d="M16 2 L25 12 L16 22 M25 12 H3" stroke="#c6c6c6" stroke-width="4.5" fill="none"/></svg>
<div class="a" style="left:1674px;top:726px;width:2px;height:50px;background:#a0a0a0"></div>
<div class="t" style="left:2895.7px;top:735.90px;font-size:22.5px;line-height:30px;color:#000;transform:scaleX(0.9549);">Text Source:</div>
<div class="a" style="left:3028px;top:726px;width:300px;height:50px;background:#e1e1e1;border:1.5px solid #adadad"></div>
<div class="t" style="left:3034.4px;top:735.90px;font-size:22.5px;line-height:30px;color:#000;transform:scaleX(0.9737);">File Text</div>
<svg class="a" style="left:3298px;top:744px;" width="20" height="14" viewBox="0 0 20 14"><path d="M2 3 L10 11 L18 3" stroke="#555" stroke-width="2" fill="none"/></svg>
<div class="a" style="left:708px;top:796px;width:2640px;height:1050px;background:#fff"></div>
<div class="a" style="left:3316px;top:796px;width:32px;height:1050px;background:#f0f0f0"></div>
<div class="a" style="left:3316px;top:830px;width:30px;height:242px;background:#cdcdcd"></div>
<svg class="a" style="left:3323px;top:806px;" width="16" height="14" viewBox="0 0 16 14"><path d="M1.5 11 L8 4 L14.5 11" stroke="#5c5c5c" stroke-width="4" fill="none"/></svg>
<svg class="a" style="left:3323px;top:1822px;" width="16" height="14" viewBox="0 0 16 14"><path d="M1.5 3 L8 10 L14.5 3" stroke="#5c5c5c" stroke-width="4" fill="none"/></svg>
<div class="m" style="left:715px;top:818.15px;font-size:25px;line-height:33px;color:#000;transform:scaleX(1.0667);-webkit-text-stroke:0.6px #fff;">Jan 18 09:31:44 victoria login[2001]: pam_unix(login:session): session opened for user root by LOGIN(uid=0)</div>
<div class="m" style="left:715px;top:858.15px;font-size:25px;line-height:33px;color:#000;transform:scaleX(1.0667);-webkit-text-stroke:0.6px #fff;">Jan 18 09:31:44 victoria login[2021]: ROOT LOGIN  on 'ttyl'</div>
<div class="m" style="left:715px;top:898.15px;font-size:25px;line-height:33px;color:#000;transform:scaleX(1.0667);-webkit-text-stroke:0.6px #fff;">Jan 18 09:58:01 victoria login[1975]: pam_unix(login:session): session opened for user root by LOGIN(uid=0)</div>
<div class="m" style="left:715px;top:938.15px;font-size:25px;line-height:33px;color:#000;transform:scaleX(1.0667);-webkit-text-stroke:0.6px #fff;">Jan 18 09:58:02 victoria login[2000]: ROOT LOGIN  on 'ttyl'</div>
<div class="m" style="left:715px;top:978.15px;font-size:25px;line-height:33px;color:#000;transform:scaleX(1.0667);-webkit-text-stroke:0.6px #fff;">Jan 18 10:57:37 victoria login[1973]: pam_unix(login:session): session opened for user root by LOGIN(uid=0)</div>
<div class="m" style="left:715px;top:1018.15px;font-size:25px;line-height:33px;color:#000;transform:scaleX(1.0667);-webkit-text-stroke:0.6px #fff;">Jan 18 10:57:37 victoria login[1997]: ROOT LOGIN  on 'ttyl'</div>
<div class="m" style="left:715px;top:1058.15px;font-size:25px;line-height:33px;color:#000;transform:scaleX(1.0667);-webkit-text-stroke:0.6px #fff;">Jan 18 10:59:00 victoria useradd[2375]: new user: name=sshd, UID=103, GID=65534, home=/var/run/sshd, shell=/usr/sbin/nologin</div>
<div class="m" style="left:715px;top:1098.15px;font-size:25px;line-height:33px;color:#000;transform:scaleX(1.0667);-webkit-text-stroke:0.6px #fff;">Jan 18 10:59:00 victoria usermod[2380]: change user `sshd' password</div>
<div class="m" style="left:715px;top:1138.15px;font-size:25px;line-height:33px;color:#000;transform:scaleX(1.0667);-webkit-text-stroke:0.6px #fff;">Jan 18 10:59:00 victoria chage[2385]: changed password expiry for sshd</div>
<div class="m" style="left:715px;top:1178.15px;font-size:25px;line-height:33px;color:#000;transform:scaleX(1.0667);-webkit-text-stroke:0.6px #fff;">Jan 18 10:59:01 victoria sshd[2416]: Server listening on :: port 22.</div>
<div class="m" style="left:715px;top:1218.15px;font-size:25px;line-height:33px;color:#000;transform:scaleX(1.0667);-webkit-text-stroke:0.6px #fff;">Jan 18 10:59:01 victoria sshd[2416]: Server listening on 0.0.0.0 port 22.</div>
<div class="m" style="left:715px;top:1258.15px;font-size:25px;line-height:33px;color:#000;transform:scaleX(1.0667);-webkit-text-stroke:0.6px #fff;">Jan 18 17:13:11 victoria sshd[1662]: Server listening on :: port 22.</div>
<div class="m" style="left:715px;top:1298.15px;font-size:25px;line-height:33px;color:#000;transform:scaleX(1.0667);-webkit-text-stroke:0.6px #fff;">Jan 18 17:13:11 victoria sshd[1662]: Server listening on 0.0.0.0 port 22.</div>
<div class="m" style="left:715px;top:1338.15px;font-size:25px;line-height:33px;color:#000;transform:scaleX(1.0667);-webkit-text-stroke:0.6px #fff;">Jan 18 17:13:12 victoria sshd[1662]: Received signal 15; terminating.</div>
<div class="m" style="left:715px;top:1378.15px;font-size:25px;line-height:33px;color:#000;transform:scaleX(1.0667);-webkit-text-stroke:0.6px #fff;">Jan 18 17:13:12 victoria sshd[1809]: Server listening on :: port 22.</div>
<div class="m" style="left:715px;top:1418.15px;font-size:25px;line-height:33px;color:#000;transform:scaleX(1.0667);-webkit-text-stroke:0.6px #fff;">Jan 18 17:13:12 victoria sshd[1809]: Server listening on 0.0.0.0 port 22.</div>
<div class="m" style="left:715px;top:1458.15px;font-size:25px;line-height:33px;color:#000;transform:scaleX(1.0667);-webkit-text-stroke:0.6px #fff;">Jan 18 17:13:28 victoria login[1995]: pam_unix(login:auth): authentication failure; logname=LOGIN uid=0 euid=0 tty=ttyl ruser= rhost=  user=root</div>
<div class="m" style="left:715px;top:1498.15px;font-size:25px;line-height:33px;color:#000;transform:scaleX(1.0667);-webkit-text-stroke:0.6px #fff;">Jan 18 17:13:31 victoria login[1995]: FAILED LOGIN (l) on 'ttyl' FOR `root', Authentication failure</div>
<div class="m" style="left:715px;top:1538.15px;font-size:25px;line-height:33px;color:#000;transform:scaleX(1.0667);-webkit-text-stroke:0.6px #fff;">Jan 18 17:13:35 victoria login[1995]: pam_unix(login:session): session opened for user root by LOGIN(uid=0)</div>
<div class="m" style="left:715px;top:1578.15px;font-size:25px;line-height:33px;color:#000;transform:scaleX(1.0667);-webkit-text-stroke:0.6px #fff;">Jan 18 17:13:35 victoria login[2015]: ROOT LOGIN  on 'ttyl'</div>
<div class="m" style="left:715px;top:1618.15px;font-size:25px;line-height:33px;color:#000;transform:scaleX(1.0667);-webkit-text-stroke:0.6px #fff;">Jan 18 17:14:36 victoria sshd[1682]: Server listening on :: port 22.</div>
<div class="m" style="left:715px;top:1658.15px;font-size:25px;line-height:33px;color:#000;transform:scaleX(1.0667);-webkit-text-stroke:0.6px #fff;">Jan 18 17:14:36 victoria sshd[1682]: Server listening on 0.0.0.0 port 22.</div>
<div class="m" style="left:715px;top:1698.15px;font-size:25px;line-height:33px;color:#000;transform:scaleX(1.0667);-webkit-text-stroke:0.6px #fff;">Jan 18 17:17:01 victoria CRON[2005]: pam_unix(cron:session): session opened for user root by (uid=0)</div>
<div class="m" style="left:715px;top:1738.15px;font-size:25px;line-height:33px;color:#000;transform:scaleX(1.0667);-webkit-text-stroke:0.6px #fff;">Jan 18 17:17:01 victoria CRON[2005]: pam_unix(cron:session): session closed for user root</div>
<div class="m" style="left:715px;top:1778.15px;font-size:25px;line-height:33px;color:#000;transform:scaleX(1.0667);-webkit-text-stroke:0.6px #fff;">Jan 18 17:19:52 victoria login[1985]: pam_unix(login:session): session opened for user root by LOGIN(uid=0)</div>
<div class="m" style="left:715px;top:1818.15px;font-size:25px;line-height:33px;color:#000;transform:scaleX(1.0667);-webkit-text-stroke:0.6px #fff;">Jan 18 17:19:52 victoria login[2010]: ROOT LOGIN  on 'ttyl'</div>
<div class="a" style="left:701px;top:968px;width:2659px;height:96px;border:3px solid #e8401e"></div>
<div class="a" style="left:704px;top:1490px;width:2635px;height:44px;border:3px solid #e8401e"></div>
<svg class="a" style="left:3319px;top:1862px;" width="30" height="30" viewBox="0 0 30 30"><defs><radialGradient id="rr" cx="0.4" cy="0.3" r="0.7"><stop offset="0" stop-color="#ff9a80"/><stop offset="1" stop-color="#d02a10"/></radialGradient></defs>
<circle cx="14.5" cy="14" r="12.5" fill="url(#rr)" stroke="#c03018" stroke-width="1"/><rect x="7" y="11.5" width="15" height="5" fill="#fff"/></svg></body></html>
